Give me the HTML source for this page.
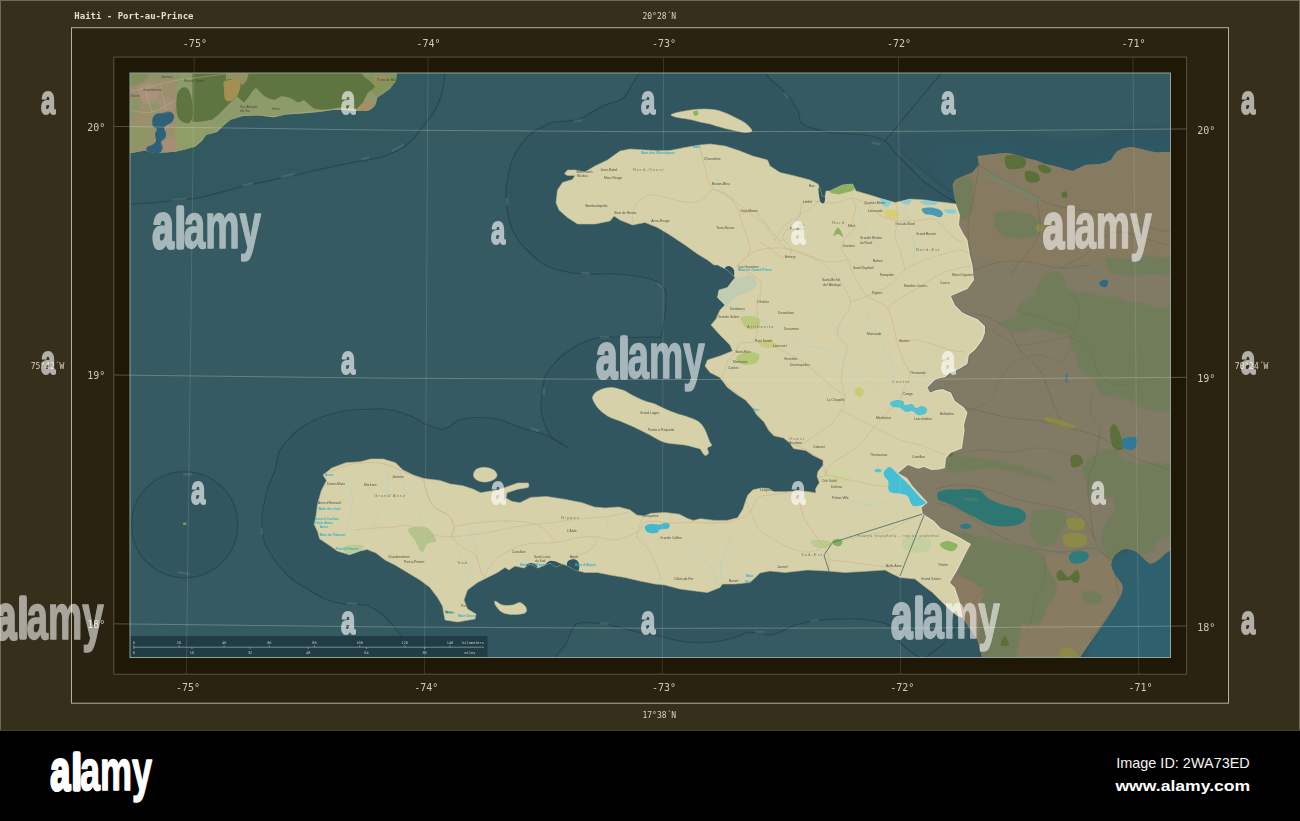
<!DOCTYPE html>
<html lang="en"><head><meta charset="utf-8"><title>Haiti - Port-au-Prince</title>
<style>
html,body{margin:0;padding:0;background:#000;}
body{width:1300px;height:821px;overflow:hidden;position:relative;}
svg{display:block;position:absolute;left:0;top:0;}
.mono{font-family:"DejaVu Sans Mono","Liberation Mono",monospace;}
.wm{font-family:"Liberation Sans","DejaVu Sans Condensed",sans-serif;font-weight:bold;}
.lbl{font-family:"Liberation Sans","DejaVu Sans",sans-serif;}
</style></head><body>
<svg width="1300" height="821" viewBox="0 0 1300 821">
<rect x="0" y="0" width="1300" height="821" fill="#000"/><rect x="0.5" y="0.5" width="1299" height="730" fill="#362f1c" stroke="#6f6853" stroke-width="1"/><rect x="71.5" y="27.7" width="1157" height="675.5" fill="#2b2311" stroke="#b8b097" stroke-width="1"/><rect x="113.8" y="57.1" width="1072.8" height="617.1" fill="#201806" stroke="#5a513b" stroke-width="1"/><defs><clipPath id="mapclip"><rect x="130.0" y="73.0" width="1040.5" height="584.5"/></clipPath><filter id="b2" x="-10%" y="-10%" width="120%" height="120%"><feGaussianBlur stdDeviation="2"/></filter><filter id="b3" x="-20%" y="-40%" width="140%" height="180%"><feGaussianBlur stdDeviation="5"/></filter><filter id="b1" x="-10%" y="-10%" width="120%" height="120%"><feGaussianBlur stdDeviation="0.8"/></filter><clipPath id="cubaclip"><path d="M128.0,72.0 L397.0,72.0 L396.0,81.0 L390.0,89.0 L383.0,94.0 L377.5,97.5 L376.5,102.0 L375.0,106.0 L371.0,109.5 L367.5,111.0 L355.0,111.0 L343.0,110.0 L332.5,110.0 L320.0,112.0 L310.0,113.0 L295.0,114.0 L286.0,114.5 L273.7,117.2 L259.0,115.4 L243.0,116.0 L230.6,119.7 L223.2,125.8 L217.0,132.0 L206.0,135.0 L202.3,140.6 L195.0,146.8 L185.0,149.5 L175.2,151.7 L165.0,152.5 L154.3,153.0 L144.5,150.5 L137.0,152.0 L128.0,153.5Z"/></clipPath><clipPath id="drclip"><path d="M956.0,204.0 L954.0,195.0 L952.5,185.0 L955.0,180.0 L960.0,177.5 L966.0,175.0 L972.5,172.5 L976.0,168.0 L979.0,165.0 L977.5,156.0 L982.5,155.5 L990.0,154.5 L1000.0,153.5 L1007.5,153.0 L1014.0,154.5 L1020.0,156.0 L1027.0,158.5 L1035.0,160.0 L1045.0,164.0 L1052.0,165.5 L1060.0,167.5 L1066.0,169.5 L1072.5,171.0 L1078.0,168.5 L1085.0,165.0 L1092.0,164.5 L1100.0,164.0 L1106.0,162.5 L1111.0,160.0 L1114.0,155.0 L1117.5,151.0 L1123.0,148.5 L1130.0,147.0 L1137.0,148.0 L1145.0,150.0 L1151.0,151.5 L1157.5,152.5 L1164.0,152.0 L1172.0,152.0 L1172.0,550.0 L1166.0,553.0 L1160.0,559.0 L1155.0,562.5 L1150.0,564.0 L1146.0,561.0 L1142.5,557.5 L1139.0,554.0 L1135.0,551.0 L1130.0,549.5 L1125.0,549.0 L1120.0,551.0 L1115.0,555.0 L1112.0,560.0 L1111.0,565.0 L1112.5,570.0 L1115.0,575.0 L1119.0,580.0 L1122.5,585.0 L1122.5,590.0 L1121.0,595.0 L1118.0,601.0 L1115.0,606.0 L1107.5,617.5 L1099.0,630.0 L1090.0,642.5 L1079.0,659.0 L982.5,659.0 L977.5,640.0 L970.0,629.0 L967.5,625.0 L962.5,617.5 L960.0,602.5 L955.0,587.5 L950.0,582.5 L957.5,570.0 L962.5,560.0 L967.5,550.0 L971.0,544.0 L960.0,537.5 L945.0,530.0 L941.0,528.5 L934.0,521.0 L922.8,513.7 L921.5,507.5 L927.7,502.6 L913.0,486.6 L907.0,478.0 L898.0,473.0 L908.0,465.0 L918.0,468.8 L924.0,467.0 L931.4,470.0 L939.0,469.4 L945.0,468.0 L946.0,458.0 L951.0,452.8 L962.0,448.5 L964.6,430.0 L964.0,425.0 L967.5,412.5 L964.0,407.5 L955.0,401.0 L951.0,392.5 L942.5,389.0 L936.0,390.0 L930.0,392.5 L927.5,387.5 L931.0,384.0 L935.0,380.0 L940.0,378.0 L945.0,377.5 L950.0,373.0 L955.0,371.0 L961.0,368.0 L967.5,364.0 L969.0,355.0 L975.0,350.0 L982.5,340.0 L985.0,333.0 L985.0,326.0 L977.5,319.0 L970.0,316.0 L962.5,312.5 L955.0,305.0 L951.0,296.0 L958.0,293.0 L967.5,289.0 L974.0,280.0 L972.5,265.0 L970.0,255.0 L967.5,240.0 L963.0,233.0 L959.0,225.0 L960.0,215.0 L956.0,204.0Z"/></clipPath><clipPath id="htclip"><path d="M564.5,173.8 L567.5,170.0 L575.0,170.0 L585.0,172.0 L595.0,166.0 L607.5,160.0 L620.0,151.0 L630.0,149.0 L645.0,150.0 L658.0,150.8 L670.0,150.5 L685.0,147.5 L700.0,145.0 L710.0,144.0 L725.0,146.0 L740.0,151.0 L752.5,156.0 L767.5,160.0 L770.0,166.0 L780.0,172.5 L795.0,176.0 L810.0,180.0 L818.0,184.0 L820.0,189.0 L822.0,196.0 L825.0,197.0 L826.0,191.0 L830.0,191.0 L836.0,188.0 L842.5,185.0 L852.5,184.0 L856.0,191.0 L863.0,193.0 L870.0,195.0 L882.5,199.0 L895.0,202.5 L902.0,201.0 L910.0,199.0 L925.0,200.0 L935.0,201.5 L945.0,202.5 L956.0,204.0 L960.0,215.0 L959.0,225.0 L963.0,233.0 L967.5,240.0 L970.0,255.0 L972.5,265.0 L974.0,280.0 L967.5,289.0 L958.0,293.0 L951.0,296.0 L955.0,305.0 L962.5,312.5 L970.0,316.0 L977.5,319.0 L985.0,326.0 L985.0,333.0 L982.5,340.0 L975.0,350.0 L969.0,355.0 L967.5,364.0 L961.0,368.0 L955.0,371.0 L950.0,373.0 L945.0,377.5 L940.0,378.0 L935.0,380.0 L931.0,384.0 L927.5,387.5 L930.0,392.5 L936.0,390.0 L942.5,389.0 L951.0,392.5 L955.0,401.0 L964.0,407.5 L967.5,412.5 L964.0,425.0 L964.6,430.0 L962.0,448.5 L951.0,452.8 L946.0,458.0 L945.0,468.0 L939.0,469.4 L931.4,470.0 L924.0,467.0 L918.0,468.8 L908.0,465.0 L898.0,473.0 L907.0,478.0 L913.0,486.6 L927.7,502.6 L921.5,507.5 L922.8,513.7 L934.0,521.0 L941.0,528.5 L945.0,530.0 L960.0,537.5 L971.0,544.0 L967.5,550.0 L962.5,560.0 L957.5,570.0 L950.0,582.5 L955.0,587.5 L960.0,602.5 L962.5,617.5 L957.5,616.0 L950.0,610.0 L942.5,602.5 L932.5,592.5 L922.5,585.0 L915.0,579.0 L900.0,577.5 L892.5,574.0 L885.0,570.0 L870.0,571.0 L845.0,572.5 L827.5,571.0 L807.5,570.0 L785.0,572.5 L770.0,571.0 L760.0,573.0 L750.0,582.5 L735.0,584.0 L722.5,584.0 L720.0,587.5 L707.5,592.5 L695.0,591.0 L680.0,589.0 L665.0,585.0 L655.0,584.0 L640.0,581.0 L625.0,577.5 L610.0,575.0 L597.5,572.5 L585.0,572.5 L575.0,570.0 L568.0,566.0 L562.5,564.0 L556.0,567.0 L550.0,563.0 L545.0,565.0 L538.0,568.0 L530.0,564.0 L524.0,568.0 L515.0,566.0 L509.0,570.0 L505.0,567.5 L497.5,572.5 L487.5,577.5 L477.5,582.5 L467.5,590.0 L464.0,600.0 L467.5,609.0 L476.0,614.0 L475.0,619.0 L457.5,622.0 L445.0,620.0 L442.5,606.0 L437.5,597.5 L430.0,587.5 L420.0,580.0 L407.5,572.5 L395.0,565.0 L385.0,560.0 L376.0,553.0 L367.2,549.4 L360.2,551.0 L349.5,554.7 L337.2,551.0 L330.0,545.8 L319.5,538.8 L317.7,531.7 L314.2,524.6 L316.0,515.8 L317.7,503.4 L321.2,491.0 L326.5,480.4 L323.0,475.0 L331.8,468.0 L346.0,462.7 L360.2,461.8 L370.8,459.0 L383.2,459.0 L395.5,462.7 L402.6,469.8 L413.2,475.0 L423.9,478.6 L439.8,480.4 L450.4,484.0 L462.8,485.7 L473.4,489.2 L480.5,492.8 L491.0,491.0 L498.0,490.0 L505.2,487.5 L517.6,483.0 L528.2,483.0 L529.0,485.5 L528.2,487.5 L517.6,489.2 L507.0,492.8 L506.0,498.0 L512.3,501.6 L520.0,502.7 L530.6,497.4 L546.5,496.5 L564.2,499.2 L582.0,502.7 L594.3,507.0 L605.0,508.0 L619.0,507.0 L629.7,509.8 L636.8,515.0 L643.9,516.0 L651.0,513.3 L665.0,512.5 L679.2,514.2 L688.0,518.7 L693.4,520.4 L700.5,518.7 L714.6,520.4 L727.0,520.4 L737.6,517.8 L743.0,509.0 L746.5,498.3 L748.0,494.8 L753.0,489.8 L761.5,488.0 L769.0,488.6 L773.8,491.7 L786.0,491.7 L798.5,491.0 L808.3,491.7 L815.7,493.0 L815.7,488.6 L819.4,482.5 L817.0,476.3 L818.0,471.4 L823.0,465.2 L823.0,460.3 L813.2,455.4 L805.8,450.5 L793.5,448.6 L789.8,443.0 L783.7,438.0 L773.8,435.7 L769.0,430.8 L764.0,422.0 L756.6,414.8 L753.0,408.6 L745.5,400.0 L737.5,395.0 L727.5,387.5 L720.0,377.5 L710.0,372.5 L705.0,366.0 L707.5,360.0 L720.0,356.0 L732.5,351.0 L730.0,345.0 L720.0,335.0 L711.0,325.0 L716.0,319.0 L720.0,310.0 L725.0,305.0 L717.5,297.5 L719.0,290.0 L727.5,287.5 L735.0,277.5 L727.5,270.0 L717.5,265.0 L714.0,265.0 L707.5,260.0 L697.5,254.0 L685.0,245.0 L670.0,235.0 L657.5,227.5 L645.0,222.5 L632.5,225.0 L620.0,220.0 L614.0,216.0 L610.0,221.0 L595.0,224.0 L577.5,224.0 L567.5,217.5 L559.0,210.0 L556.0,202.5 L557.5,190.0 L562.5,182.5 L572.5,179.5 L575.0,175.5 L567.5,175.5Z M671.0,115.0 L677.0,112.5 L685.0,111.0 L695.0,109.5 L705.0,109.0 L713.0,109.5 L720.0,111.0 L728.0,114.0 L735.0,117.5 L742.0,121.0 L747.5,125.0 L752.0,131.0 L745.0,132.5 L736.0,131.0 L727.5,129.0 L718.0,126.5 L710.0,124.0 L700.0,122.0 L692.5,120.0 L684.0,118.5 L677.5,117.5Z M592.5,397.5 L595.0,393.0 L600.0,390.0 L606.0,388.0 L612.5,387.5 L619.0,389.0 L625.0,391.0 L632.0,395.0 L640.0,399.0 L648.0,402.0 L655.0,404.0 L662.0,407.5 L670.0,411.0 L678.0,414.0 L685.0,416.0 L692.0,418.5 L697.5,421.0 L702.0,425.0 L706.0,432.0 L709.8,441.8 L711.7,445.5 L707.4,448.0 L708.6,453.0 L705.0,455.4 L701.2,450.5 L700.0,449.0 L693.0,447.0 L685.0,445.0 L675.0,444.0 L665.0,442.5 L657.0,439.0 L650.0,435.0 L642.0,431.0 L635.0,427.5 L627.0,424.0 L620.0,421.0 L613.0,418.5 L607.5,416.0 L602.0,412.0 L597.5,407.5 L594.0,402.0Z M495.0,601.0 L502.5,605.0 L512.5,605.0 L520.0,602.5 L526.0,607.5 L525.0,613.0 L512.5,614.5 L502.5,612.5 L496.0,606.0Z"/></clipPath></defs><g clip-path="url(#mapclip)"><rect x="130.0" y="73.0" width="1040.5" height="584.5" fill="#355a61"/><g filter="url(#b1)"><path d="M640.0,72.0 L632.5,84.0 L624.0,97.5 L615.0,102.0 L605.0,105.0 L592.0,112.0 L580.0,119.0 L566.0,121.0 L552.5,122.5 L542.0,127.0 L532.5,132.5 L524.0,141.0 L517.5,150.0 L512.0,161.0 L509.0,172.5 L506.5,186.0 L506.0,200.0 L507.5,211.0 L510.0,222.5 L514.0,233.0 L520.0,242.5 L527.0,250.0 L535.0,257.5 L545.0,265.0 L562.5,271.0 L585.0,274.0 L620.0,274.0 L645.0,277.5 L655.0,280.5 L660.0,284.0 L664.0,288.0 L666.0,292.5 L666.0,303.0 L665.0,315.0 L661.0,337.5 L648.0,337.0 L632.5,337.5 L615.0,337.0 L600.0,337.5 L590.0,340.0 L580.0,344.0 L570.0,350.0 L560.0,357.5 L553.0,365.0 L547.5,372.5 L544.0,381.0 L542.5,390.0 L541.0,407.5 L542.5,417.0 L545.0,425.0 L549.0,433.0 L555.0,440.0 L567.5,447.5 L557.5,441.0 L545.0,435.0 L532.0,431.0 L520.0,427.5 L500.0,420.0 L488.0,418.0 L477.5,417.5 L467.0,418.5 L457.5,421.0 L445.0,429.0 L435.0,427.5 L425.0,424.0 L415.0,418.0 L405.0,414.0 L393.0,410.5 L380.0,409.0 L362.0,409.5 L345.0,411.0 L330.0,414.5 L315.0,420.0 L304.0,426.0 L295.0,432.5 L287.0,441.0 L280.0,450.0 L277.0,460.0 L275.0,470.0 L267.5,490.0 L262.5,512.5 L262.0,522.0 L262.5,532.5 L265.0,543.0 L270.0,552.5 L277.0,563.0 L285.0,572.5 L294.0,580.5 L305.0,587.5 L325.0,599.0 L345.0,604.0 L365.0,605.0 L373.0,608.0 L380.0,612.5 L387.0,618.5 L392.5,625.0 L401.0,636.0 L412.0,660.0 L552.5,660.0 L565.0,645.0 L570.0,634.0 L575.0,625.0 L580.0,623.0 L585.0,622.5 L605.0,624.0 L620.0,627.5 L640.0,632.5 L660.0,636.0 L680.0,641.0 L700.0,642.5 L720.0,641.0 L735.0,637.5 L747.5,632.5 L758.0,633.0 L770.0,635.0 L782.0,631.0 L795.0,625.0 L820.0,620.0 L855.0,618.8 L875.0,621.0 L890.0,626.0 L900.0,642.5 L922.5,660.0 L1172.0,660.0 L1172.0,124.0 L1172.0,124.0 L1130.0,126.0 L1100.0,136.0 L1075.0,140.0 L1050.0,137.0 L1010.0,131.0 L960.0,131.0 L930.0,131.5 L900.0,134.0 L885.0,141.0 L956.0,202.5 L945.0,196.0 L925.0,182.5 L910.0,167.5 L895.0,152.5 L885.0,141.0 L865.0,135.0 L830.0,132.5 L802.5,124.0 L797.5,110.0 L785.0,92.5 L770.0,79.0 L765.0,72.0Z" fill="#305760"/><path d="M128.0,204.5 L150.0,203.0 L170.0,201.0 L202.0,197.0 L245.0,186.0 L295.0,175.0 L345.0,164.0 L380.0,157.5 L400.0,149.0 L412.0,140.0 L420.0,130.0 L428.0,120.0 L435.0,110.0 L442.0,92.5 L445.0,72.0 L128.0,72.0Z" fill="#325860"/><circle cx="184.6" cy="524.7" r="53" fill="#305760"/></g><path d="M1079,670 L1190,670 L1190,530 L1140,545 L1105,560 L1110,600 Z" fill="#2f6575" opacity="0.7" filter="url(#b2)"/><path d="M930,150 L1000,140 L1060,150 L1110,146 L1135,134 L1190,136 L1190,175 L1100,185 L1000,175 L960,210 Z" fill="#2b5b6b" opacity="0.35" filter="url(#b3)"/><path d="M128.0,72.0 L397.0,72.0 L396.0,81.0 L390.0,89.0 L383.0,94.0 L377.5,97.5 L376.5,102.0 L375.0,106.0 L371.0,109.5 L367.5,111.0 L355.0,111.0 L343.0,110.0 L332.5,110.0 L320.0,112.0 L310.0,113.0 L295.0,114.0 L286.0,114.5 L273.7,117.2 L259.0,115.4 L243.0,116.0 L230.6,119.7 L223.2,125.8 L217.0,132.0 L206.0,135.0 L202.3,140.6 L195.0,146.8 L185.0,149.5 L175.2,151.7 L165.0,152.5 L154.3,153.0 L144.5,150.5 L137.0,152.0 L128.0,153.5Z" fill="#8d9a69"/><path d="M128.0,72.0 L178.0,72.0 L176.0,88.0 L177.0,105.0 L175.0,127.0 L175.5,151.5 L165.0,152.5 L154.3,153.0 L144.5,150.5 L137.0,152.0 L128.0,153.5Z" fill="#9b8f6e"/><path d="M175.0,127.0 L205.0,127.0 L206.0,135.0 L202.3,140.6 L195.0,146.8 L185.0,149.5 L175.2,151.7Z" fill="#8f9e66"/><path d="M192.5,72.0 L362.0,72.0 L363.0,75.4 L370.0,81.0 L375.4,86.5 L372.0,90.0 L368.0,92.6 L365.0,98.0 L363.0,102.5 L360.0,106.0 L357.0,108.6 L347.0,108.0 L338.5,107.4 L332.0,108.8 L326.0,109.8 L320.0,109.5 L313.8,108.6 L308.5,104.0 L304.0,100.0 L300.5,101.5 L297.8,102.5 L293.0,99.5 L289.2,97.5 L284.5,96.5 L280.6,96.3 L277.5,98.5 L274.5,100.0 L269.0,98.5 L264.6,96.3 L260.0,92.0 L256.0,87.7 L253.5,90.0 L251.5,92.6 L247.0,99.0 L244.0,102.5 L240.0,99.0 L236.8,96.3 L230.0,103.0 L224.5,108.6 L218.0,115.0 L212.0,119.7 L202.0,121.5 L192.5,122.0Z" fill="#5f7541"/><path d="M176.5,100.0 C176.8,97.0 176.9,94.1 178.0,92.0 C179.1,89.9 181.3,88.0 183.0,87.5 C184.7,87.0 186.7,87.6 188.0,89.0 C189.3,90.4 190.2,93.2 191.0,96.0 C191.8,98.8 192.2,102.5 192.5,106.0 C192.8,109.5 193.1,114.2 192.5,117.0 C191.9,119.8 190.6,122.2 189.0,123.0 C187.4,123.8 184.8,122.8 183.0,122.0 C181.2,121.2 179.6,120.0 178.5,118.0 C177.4,116.0 176.8,113.0 176.5,110.0 C176.2,107.0 176.2,103.0 176.5,100.0Z" fill="#5f7541"/><path d="M225.7,72.0 L249.0,72.0 L247.0,80.0 L243.0,85.0 L238.0,82.0 L230.0,79.0 L226.0,80.0Z" fill="#94915e"/><path d="M223.8,82.0 C224.5,80.4 226.0,80.5 228.0,80.3 C230.0,80.0 233.9,79.9 236.0,80.5 C238.1,81.1 240.0,82.1 240.5,84.0 C241.0,85.9 239.8,89.8 239.0,92.0 C238.2,94.2 237.5,95.5 236.0,97.0 C234.5,98.5 231.8,100.9 230.0,101.2 C228.2,101.5 226.0,100.9 225.0,99.0 C224.0,97.1 224.2,92.8 224.0,90.0 C223.8,87.2 223.1,83.6 223.8,82.0Z" fill="#a38f52"/><path d="M152.5,119.0 C153.0,117.0 154.2,115.0 156.0,114.0 C157.8,113.0 161.3,113.4 163.0,113.0 C164.7,112.6 164.7,111.7 166.0,111.5 C167.3,111.3 169.7,111.2 171.0,112.0 C172.3,112.8 173.8,114.3 174.0,116.0 C174.2,117.7 173.2,120.5 172.0,122.0 C170.8,123.5 168.3,124.0 167.0,125.0 C165.7,126.0 164.2,126.7 164.0,128.0 C163.8,129.3 165.8,131.2 166.0,133.0 C166.2,134.8 165.8,137.5 165.0,139.0 C164.2,140.5 161.3,140.7 161.0,142.0 C160.7,143.3 163.2,145.2 163.0,147.0 C162.8,148.8 161.4,151.5 160.0,152.5 C158.6,153.5 156.5,153.2 154.3,153.0 C152.1,152.8 148.2,152.0 147.0,151.0 C145.8,150.0 146.2,148.0 147.0,147.0 C147.8,146.0 150.5,146.0 152.0,145.0 C153.5,144.0 155.5,142.8 156.0,141.0 C156.5,139.2 154.8,136.0 155.0,134.0 C155.2,132.0 157.3,130.3 157.0,129.0 C156.7,127.7 153.8,127.7 153.0,126.0 C152.2,124.3 152.0,121.0 152.5,119.0Z" fill="#2d6079"/><g clip-path="url(#cubaclip)"><path d="M362,72 L398,72 L397,80 L390,88 L380,95 L375.4,96.3 L372,90 L375.4,86.5 L370,81 L363,75.4 Z" fill="#86935a"/><path d="M374,76 L384,75 L388,79 L380,83 L374,81 Z" fill="#9b8f62"/><path d="M357.5,109.0 C357.7,107.8 359.6,105.8 361.0,104.5 C362.4,103.2 364.3,101.7 366.0,101.0 C367.7,100.3 369.8,100.0 371.0,100.5 C372.2,101.0 373.0,102.7 373.0,104.0 C373.0,105.3 371.9,107.3 371.0,108.5 C370.1,109.7 369.3,110.7 367.5,111.2 C365.7,111.7 361.7,111.9 360.0,111.5 C358.3,111.1 357.3,110.2 357.5,109.0Z" fill="#a48f66"/><path d="M128.0,72.0 C131.7,69.7 147.0,70.7 150.0,72.0 C153.0,73.3 148.0,78.0 146.0,80.0 C144.0,82.0 141.0,83.0 138.0,84.0 C135.0,85.0 129.7,88.0 128.0,86.0 C126.3,84.0 124.3,74.3 128.0,72.0Z" fill="#7f8f5c" filter="url(#b1)"/><path d="M150.0,72.0 C153.7,70.7 173.7,70.7 178.0,72.0 C182.3,73.3 178.2,79.0 176.0,80.0 C173.8,81.0 168.3,78.0 165.0,78.0 C161.7,78.0 158.5,81.0 156.0,80.0 C153.5,79.0 146.3,73.3 150.0,72.0Z" fill="#8d9468" filter="url(#b1)"/><path d="M128.0,100.0 C129.3,96.3 134.0,96.7 136.0,98.0 C138.0,99.3 140.3,104.7 140.0,108.0 C139.7,111.3 136.0,116.0 134.0,118.0 C132.0,120.0 129.0,123.0 128.0,120.0 C127.0,117.0 126.7,103.7 128.0,100.0Z" fill="#8b9466" filter="url(#b1)"/><path d="M140.0,86.0 C142.0,84.0 148.7,83.0 152.0,84.0 C155.3,85.0 159.3,89.0 160.0,92.0 C160.7,95.0 158.3,100.0 156.0,102.0 C153.7,104.0 148.7,105.0 146.0,104.0 C143.3,103.0 141.0,99.0 140.0,96.0 C139.0,93.0 138.0,88.0 140.0,86.0Z" fill="#a8927a" filter="url(#b1)"/><path d="M158.0,100.0 C160.0,98.0 167.3,96.7 170.0,98.0 C172.7,99.3 174.7,105.7 174.0,108.0 C173.3,110.3 168.7,111.7 166.0,112.0 C163.3,112.3 159.3,112.0 158.0,110.0 C156.7,108.0 156.0,102.0 158.0,100.0Z" fill="#a39178" filter="url(#b1)"/><path d="M130.0,128.0 C133.3,124.2 146.3,125.0 150.0,127.0 C153.7,129.0 153.7,136.5 152.0,140.0 C150.3,143.5 143.7,146.3 140.0,148.0 C136.3,149.7 131.7,153.3 130.0,150.0 C128.3,146.7 126.7,131.8 130.0,128.0Z" fill="#8f9565" filter="url(#b1)"/><path d="M163.0,140.0 C164.7,137.8 172.9,137.2 175.0,139.0 C177.1,140.8 177.2,148.8 175.5,151.0 C173.8,153.2 167.1,153.8 165.0,152.0 C162.9,150.2 161.3,142.2 163.0,140.0Z" fill="#a69074" filter="url(#b1)"/><path d="M150.0,104.0 C151.0,102.7 156.5,102.0 158.0,103.0 C159.5,104.0 160.0,108.7 159.0,110.0 C158.0,111.3 153.5,112.0 152.0,111.0 C150.5,110.0 149.0,105.3 150.0,104.0Z" fill="#8a9a66" filter="url(#b1)"/><path d="M206,135 L217,132 L223,126 L231,120 L243,116 L259,115.4 L274,117.2 L286,114.5 L300,113 L320,111 L340,109.5 L355,111" fill="none" stroke="#a9a57a" stroke-width="1.6" opacity="0.7"/><g fill="none" stroke="#c9b08e" stroke-width="0.6" opacity="0.7"><path d="M128.0,92.0 C130.8,91.3 139.7,89.3 145.0,88.0 C150.3,86.7 154.5,85.3 160.0,84.0 C165.5,82.7 172.2,81.0 178.0,80.0 C183.8,79.0 189.7,78.7 195.0,78.0 C200.3,77.3 205.0,76.7 210.0,76.0 C215.0,75.3 222.5,74.3 225.0,74.0"/><path d="M145.0,88.0 C145.5,90.0 146.8,96.0 148.0,100.0 C149.2,104.0 151.3,110.0 152.0,112.0"/><path d="M128.0,110.0 C130.0,110.3 136.0,111.7 140.0,112.0 C144.0,112.3 147.8,113.0 152.0,112.0 C156.2,111.0 161.0,108.0 165.0,106.0 C169.0,104.0 174.2,101.0 176.0,100.0"/><path d="M195.0,146.0 C196.7,144.7 201.2,140.7 205.0,138.0 C208.8,135.3 213.5,132.8 218.0,130.0 C222.5,127.2 227.5,123.0 232.0,121.0 C236.5,119.0 240.0,118.7 245.0,118.0 C250.0,117.3 256.2,117.2 262.0,117.0 C267.8,116.8 277.0,116.6 280.0,116.5"/><path d="M160.0,84.0 C160.5,86.0 162.0,91.7 163.0,96.0 C164.0,100.3 165.5,107.7 166.0,110.0"/></g><g class="lbl" font-size="3.2px" fill="#3a3a2c" opacity="0.8"><text x="143.0" y="90.5">Guantánamo</text><text x="161.0" y="77.5">Jamaica</text><text x="184.0" y="81.5">Manuel Tames</text><text x="130.5" y="96.5">Niceto</text><text x="240.0" y="108.0">San Antonio</text><text x="240.0" y="112.0">del Sur</text><text x="272.0" y="110.0">Imías</text><text x="377.0" y="81.0">Punta de Maisí</text></g></g><path d="M564.5,173.8 L567.5,170.0 L575.0,170.0 L585.0,172.0 L595.0,166.0 L607.5,160.0 L620.0,151.0 L630.0,149.0 L645.0,150.0 L658.0,150.8 L670.0,150.5 L685.0,147.5 L700.0,145.0 L710.0,144.0 L725.0,146.0 L740.0,151.0 L752.5,156.0 L767.5,160.0 L770.0,166.0 L780.0,172.5 L795.0,176.0 L810.0,180.0 L818.0,184.0 L820.0,189.0 L822.0,196.0 L825.0,197.0 L826.0,191.0 L830.0,191.0 L836.0,188.0 L842.5,185.0 L852.5,184.0 L856.0,191.0 L863.0,193.0 L870.0,195.0 L882.5,199.0 L895.0,202.5 L902.0,201.0 L910.0,199.0 L925.0,200.0 L935.0,201.5 L945.0,202.5 L956.0,204.0 L960.0,215.0 L959.0,225.0 L963.0,233.0 L967.5,240.0 L970.0,255.0 L972.5,265.0 L974.0,280.0 L967.5,289.0 L958.0,293.0 L951.0,296.0 L955.0,305.0 L962.5,312.5 L970.0,316.0 L977.5,319.0 L985.0,326.0 L985.0,333.0 L982.5,340.0 L975.0,350.0 L969.0,355.0 L967.5,364.0 L961.0,368.0 L955.0,371.0 L950.0,373.0 L945.0,377.5 L940.0,378.0 L935.0,380.0 L931.0,384.0 L927.5,387.5 L930.0,392.5 L936.0,390.0 L942.5,389.0 L951.0,392.5 L955.0,401.0 L964.0,407.5 L967.5,412.5 L964.0,425.0 L964.6,430.0 L962.0,448.5 L951.0,452.8 L946.0,458.0 L945.0,468.0 L939.0,469.4 L931.4,470.0 L924.0,467.0 L918.0,468.8 L908.0,465.0 L898.0,473.0 L907.0,478.0 L913.0,486.6 L927.7,502.6 L921.5,507.5 L922.8,513.7 L934.0,521.0 L941.0,528.5 L945.0,530.0 L960.0,537.5 L971.0,544.0 L967.5,550.0 L962.5,560.0 L957.5,570.0 L950.0,582.5 L955.0,587.5 L960.0,602.5 L962.5,617.5 L957.5,616.0 L950.0,610.0 L942.5,602.5 L932.5,592.5 L922.5,585.0 L915.0,579.0 L900.0,577.5 L892.5,574.0 L885.0,570.0 L870.0,571.0 L845.0,572.5 L827.5,571.0 L807.5,570.0 L785.0,572.5 L770.0,571.0 L760.0,573.0 L750.0,582.5 L735.0,584.0 L722.5,584.0 L720.0,587.5 L707.5,592.5 L695.0,591.0 L680.0,589.0 L665.0,585.0 L655.0,584.0 L640.0,581.0 L625.0,577.5 L610.0,575.0 L597.5,572.5 L585.0,572.5 L575.0,570.0 L568.0,566.0 L562.5,564.0 L556.0,567.0 L550.0,563.0 L545.0,565.0 L538.0,568.0 L530.0,564.0 L524.0,568.0 L515.0,566.0 L509.0,570.0 L505.0,567.5 L497.5,572.5 L487.5,577.5 L477.5,582.5 L467.5,590.0 L464.0,600.0 L467.5,609.0 L476.0,614.0 L475.0,619.0 L457.5,622.0 L445.0,620.0 L442.5,606.0 L437.5,597.5 L430.0,587.5 L420.0,580.0 L407.5,572.5 L395.0,565.0 L385.0,560.0 L376.0,553.0 L367.2,549.4 L360.2,551.0 L349.5,554.7 L337.2,551.0 L330.0,545.8 L319.5,538.8 L317.7,531.7 L314.2,524.6 L316.0,515.8 L317.7,503.4 L321.2,491.0 L326.5,480.4 L323.0,475.0 L331.8,468.0 L346.0,462.7 L360.2,461.8 L370.8,459.0 L383.2,459.0 L395.5,462.7 L402.6,469.8 L413.2,475.0 L423.9,478.6 L439.8,480.4 L450.4,484.0 L462.8,485.7 L473.4,489.2 L480.5,492.8 L491.0,491.0 L498.0,490.0 L505.2,487.5 L517.6,483.0 L528.2,483.0 L529.0,485.5 L528.2,487.5 L517.6,489.2 L507.0,492.8 L506.0,498.0 L512.3,501.6 L520.0,502.7 L530.6,497.4 L546.5,496.5 L564.2,499.2 L582.0,502.7 L594.3,507.0 L605.0,508.0 L619.0,507.0 L629.7,509.8 L636.8,515.0 L643.9,516.0 L651.0,513.3 L665.0,512.5 L679.2,514.2 L688.0,518.7 L693.4,520.4 L700.5,518.7 L714.6,520.4 L727.0,520.4 L737.6,517.8 L743.0,509.0 L746.5,498.3 L748.0,494.8 L753.0,489.8 L761.5,488.0 L769.0,488.6 L773.8,491.7 L786.0,491.7 L798.5,491.0 L808.3,491.7 L815.7,493.0 L815.7,488.6 L819.4,482.5 L817.0,476.3 L818.0,471.4 L823.0,465.2 L823.0,460.3 L813.2,455.4 L805.8,450.5 L793.5,448.6 L789.8,443.0 L783.7,438.0 L773.8,435.7 L769.0,430.8 L764.0,422.0 L756.6,414.8 L753.0,408.6 L745.5,400.0 L737.5,395.0 L727.5,387.5 L720.0,377.5 L710.0,372.5 L705.0,366.0 L707.5,360.0 L720.0,356.0 L732.5,351.0 L730.0,345.0 L720.0,335.0 L711.0,325.0 L716.0,319.0 L720.0,310.0 L725.0,305.0 L717.5,297.5 L719.0,290.0 L727.5,287.5 L735.0,277.5 L727.5,270.0 L717.5,265.0 L714.0,265.0 L707.5,260.0 L697.5,254.0 L685.0,245.0 L670.0,235.0 L657.5,227.5 L645.0,222.5 L632.5,225.0 L620.0,220.0 L614.0,216.0 L610.0,221.0 L595.0,224.0 L577.5,224.0 L567.5,217.5 L559.0,210.0 L556.0,202.5 L557.5,190.0 L562.5,182.5 L572.5,179.5 L575.0,175.5 L567.5,175.5Z" fill="#d6d1a9" stroke="#b9b690" stroke-width="0.6"/><path d="M671.0,115.0 C670.9,114.2 674.7,113.2 677.0,112.5 C679.3,111.8 682.0,111.5 685.0,111.0 C688.0,110.5 691.7,109.8 695.0,109.5 C698.3,109.2 702.0,109.0 705.0,109.0 C708.0,109.0 710.5,109.2 713.0,109.5 C715.5,109.8 717.5,110.2 720.0,111.0 C722.5,111.8 725.5,112.9 728.0,114.0 C730.5,115.1 732.7,116.3 735.0,117.5 C737.3,118.7 739.9,119.8 742.0,121.0 C744.1,122.2 745.8,123.3 747.5,125.0 C749.2,126.7 752.4,129.8 752.0,131.0 C751.6,132.2 747.7,132.5 745.0,132.5 C742.3,132.5 738.9,131.6 736.0,131.0 C733.1,130.4 730.5,129.8 727.5,129.0 C724.5,128.2 720.9,127.3 718.0,126.5 C715.1,125.7 713.0,124.8 710.0,124.0 C707.0,123.2 702.9,122.7 700.0,122.0 C697.1,121.3 695.2,120.6 692.5,120.0 C689.8,119.4 686.5,118.9 684.0,118.5 C681.5,118.1 679.7,118.1 677.5,117.5 C675.3,116.9 671.1,115.8 671.0,115.0Z" fill="#d6d1a9" stroke="#b9b690" stroke-width="0.5"/><path d="M592.5,397.5 C592.7,396.0 593.8,394.2 595.0,393.0 C596.2,391.8 598.2,390.8 600.0,390.0 C601.8,389.2 603.9,388.4 606.0,388.0 C608.1,387.6 610.3,387.3 612.5,387.5 C614.7,387.7 616.9,388.4 619.0,389.0 C621.1,389.6 622.8,390.0 625.0,391.0 C627.2,392.0 629.5,393.7 632.0,395.0 C634.5,396.3 637.3,397.8 640.0,399.0 C642.7,400.2 645.5,401.2 648.0,402.0 C650.5,402.8 652.7,403.1 655.0,404.0 C657.3,404.9 659.5,406.3 662.0,407.5 C664.5,408.7 667.3,409.9 670.0,411.0 C672.7,412.1 675.5,413.2 678.0,414.0 C680.5,414.8 682.7,415.2 685.0,416.0 C687.3,416.8 689.9,417.7 692.0,418.5 C694.1,419.3 695.8,419.9 697.5,421.0 C699.2,422.1 700.6,423.2 702.0,425.0 C703.4,426.8 704.7,429.2 706.0,432.0 C707.3,434.8 708.8,439.6 709.8,441.8 C710.8,444.1 712.1,444.5 711.7,445.5 C711.3,446.5 707.9,446.8 707.4,448.0 C706.9,449.2 709.0,451.8 708.6,453.0 C708.2,454.2 706.2,455.8 705.0,455.4 C703.8,455.0 702.0,451.6 701.2,450.5 C700.4,449.4 701.4,449.6 700.0,449.0 C698.6,448.4 695.5,447.7 693.0,447.0 C690.5,446.3 688.0,445.5 685.0,445.0 C682.0,444.5 678.3,444.4 675.0,444.0 C671.7,443.6 668.0,443.3 665.0,442.5 C662.0,441.7 659.5,440.2 657.0,439.0 C654.5,437.8 652.5,436.3 650.0,435.0 C647.5,433.7 644.5,432.2 642.0,431.0 C639.5,429.8 637.5,428.7 635.0,427.5 C632.5,426.3 629.5,425.1 627.0,424.0 C624.5,422.9 622.3,421.9 620.0,421.0 C617.7,420.1 615.1,419.3 613.0,418.5 C610.9,417.7 609.3,417.1 607.5,416.0 C605.7,414.9 603.7,413.4 602.0,412.0 C600.3,410.6 598.8,409.2 597.5,407.5 C596.2,405.8 594.8,403.7 594.0,402.0 C593.2,400.3 592.3,399.0 592.5,397.5Z" fill="#d6d1a9" stroke="#b9b690" stroke-width="0.5"/><path d="M495.0,601.0 C496.1,600.8 499.6,604.3 502.5,605.0 C505.4,605.7 509.6,605.4 512.5,605.0 C515.4,604.6 517.8,602.1 520.0,602.5 C522.2,602.9 525.2,605.8 526.0,607.5 C526.8,609.2 527.2,611.8 525.0,613.0 C522.8,614.2 516.2,614.6 512.5,614.5 C508.8,614.4 505.2,613.9 502.5,612.5 C499.8,611.1 497.2,607.9 496.0,606.0 C494.8,604.1 493.9,601.2 495.0,601.0Z" fill="#d6d1a9" stroke="#b9b690" stroke-width="0.5"/><path d="M473.5,474.0 C473.8,472.6 474.6,470.6 476.0,469.5 C477.4,468.4 479.8,467.8 482.0,467.5 C484.2,467.2 486.8,467.4 489.0,468.0 C491.2,468.6 493.7,469.7 495.0,471.0 C496.3,472.3 497.3,474.5 497.0,476.0 C496.7,477.5 494.8,479.0 493.0,480.0 C491.2,481.0 488.3,481.8 486.0,482.0 C483.7,482.2 480.9,481.7 479.0,481.0 C477.1,480.3 475.4,479.2 474.5,478.0 C473.6,476.8 473.2,475.4 473.5,474.0Z" fill="#d6d1a9" stroke="#b9b690" stroke-width="0.5"/><path d="M956.0,204.0 L954.0,195.0 L952.5,185.0 L955.0,180.0 L960.0,177.5 L966.0,175.0 L972.5,172.5 L976.0,168.0 L979.0,165.0 L977.5,156.0 L982.5,155.5 L990.0,154.5 L1000.0,153.5 L1007.5,153.0 L1014.0,154.5 L1020.0,156.0 L1027.0,158.5 L1035.0,160.0 L1045.0,164.0 L1052.0,165.5 L1060.0,167.5 L1066.0,169.5 L1072.5,171.0 L1078.0,168.5 L1085.0,165.0 L1092.0,164.5 L1100.0,164.0 L1106.0,162.5 L1111.0,160.0 L1114.0,155.0 L1117.5,151.0 L1123.0,148.5 L1130.0,147.0 L1137.0,148.0 L1145.0,150.0 L1151.0,151.5 L1157.5,152.5 L1164.0,152.0 L1172.0,152.0 L1172.0,550.0 L1166.0,553.0 L1160.0,559.0 L1155.0,562.5 L1150.0,564.0 L1146.0,561.0 L1142.5,557.5 L1139.0,554.0 L1135.0,551.0 L1130.0,549.5 L1125.0,549.0 L1120.0,551.0 L1115.0,555.0 L1112.0,560.0 L1111.0,565.0 L1112.5,570.0 L1115.0,575.0 L1119.0,580.0 L1122.5,585.0 L1122.5,590.0 L1121.0,595.0 L1118.0,601.0 L1115.0,606.0 L1107.5,617.5 L1099.0,630.0 L1090.0,642.5 L1079.0,659.0 L982.5,659.0 L977.5,640.0 L970.0,629.0 L967.5,625.0 L962.5,617.5 L960.0,602.5 L955.0,587.5 L950.0,582.5 L957.5,570.0 L962.5,560.0 L967.5,550.0 L971.0,544.0 L960.0,537.5 L945.0,530.0 L941.0,528.5 L934.0,521.0 L922.8,513.7 L921.5,507.5 L927.7,502.6 L913.0,486.6 L907.0,478.0 L898.0,473.0 L908.0,465.0 L918.0,468.8 L924.0,467.0 L931.4,470.0 L939.0,469.4 L945.0,468.0 L946.0,458.0 L951.0,452.8 L962.0,448.5 L964.6,430.0 L964.0,425.0 L967.5,412.5 L964.0,407.5 L955.0,401.0 L951.0,392.5 L942.5,389.0 L936.0,390.0 L930.0,392.5 L927.5,387.5 L931.0,384.0 L935.0,380.0 L940.0,378.0 L945.0,377.5 L950.0,373.0 L955.0,371.0 L961.0,368.0 L967.5,364.0 L969.0,355.0 L975.0,350.0 L982.5,340.0 L985.0,333.0 L985.0,326.0 L977.5,319.0 L970.0,316.0 L962.5,312.5 L955.0,305.0 L951.0,296.0 L958.0,293.0 L967.5,289.0 L974.0,280.0 L972.5,265.0 L970.0,255.0 L967.5,240.0 L963.0,233.0 L959.0,225.0 L960.0,215.0 L956.0,204.0Z" fill="#817a65"/><g clip-path="url(#drclip)"><path d="M950,150 L1172,140 L1172,270 L1100,262 L1040,268 L1000,262 L965,255 Z" fill="#867a60" filter="url(#b2)"/><path d="M1044,556 L1112,556 L1125,590 L1100,630 L1080,660 L1015,660 L1021,624 L1040,624 L1056,595 L1056,583 Z" fill="#877c62" filter="url(#b1)"/><path d="M952,578 L968,579.5 L985.7,590 L980.4,604.3 L979.5,643 L983,657 L975,640 L962,618 L960,602 Z" fill="#8a7b60"/><path d="M1017.5,311.0 L1021.0,303.0 L1033.5,296.0 L1037.0,287.0 L1042.0,279.0 L1050.0,272.0 L1058.0,271.0 L1064.0,278.0 L1065.3,287.0 L1076.0,292.4 L1090.0,292.4 L1104.2,297.7 L1114.9,296.0 L1129.0,303.0 L1139.6,301.2 L1153.8,308.3 L1172.0,306.5 L1172.0,411.0 L1153.8,410.0 L1139.6,407.4 L1129.0,400.3 L1114.9,396.8 L1100.7,393.2 L1095.4,382.6 L1086.5,375.5 L1079.5,368.5 L1076.0,357.8 L1072.4,347.2 L1068.9,336.6 L1058.2,333.0 L1047.6,331.3 L1037.0,327.8 L1026.4,331.3 L1015.8,333.0 L1010.5,329.5 L998.0,322.5 L1005.0,320.7 L1015.8,319.0Z" fill="#717c5a" filter="url(#b1)"/><path d="M1104.0,257.0 L1125.0,259.0 L1150.0,256.0 L1172.0,258.0 L1172.0,275.0 L1150.0,274.0 L1130.0,276.0 L1110.0,272.0Z" fill="#717c5a" filter="url(#b1)"/><path d="M994.5,213.0 L1010.0,211.0 L1030.0,214.0 L1040.5,222.0 L1038.0,235.0 L1020.0,239.0 L1002.0,236.0 L994.0,226.0Z" fill="#717c5a" filter="url(#b1)"/><path d="M955.6,180.0 L965.0,177.0 L973.0,180.0 L973.0,200.0 L970.0,215.0 L962.0,221.0 L956.0,212.0 L954.0,195.0Z" fill="#717c5a" filter="url(#b1)"/><path d="M1081.0,467.8 L1091.9,457.0 L1104.0,450.0 L1118.4,450.0 L1122.0,459.0 L1136.0,462.5 L1172.0,464.0 L1172.0,535.0 L1157.0,540.0 L1153.8,551.0 L1139.6,554.5 L1130.8,549.0 L1122.0,549.0 L1114.9,554.5 L1109.5,561.5 L1104.0,551.0 L1100.7,540.0 L1104.2,526.0 L1114.9,512.0 L1114.9,497.8 L1106.0,496.0 L1088.3,496.0 L1086.5,480.0Z" fill="#717c5a" filter="url(#b1)"/><path d="M1033.5,512.0 L1051.0,508.5 L1065.3,512.0 L1067.0,522.6 L1058.2,533.0 L1054.7,543.8 L1040.5,547.4 L1031.7,536.8 L1030.0,522.6Z" fill="#717c5a" filter="url(#b1)"/><path d="M952.0,455.4 L971.5,458.0 L998.0,460.7 L1019.3,466.0 L1044.0,474.8 L1054.7,478.4 L1051.0,482.0 L1033.5,476.6 L1012.2,471.3 L989.2,467.8 L962.7,471.3 L948.5,473.0 L946.0,462.0Z" fill="#717c5a" filter="url(#b1)"/><path d="M941.0,528.5 L955.0,531.0 L968.0,533.0 L985.0,538.0 L998.0,542.0 L1015.0,545.0 L1030.0,547.7 L1044.0,556.5 L1047.6,570.7 L1056.5,583.0 L1054.7,595.5 L1047.6,604.3 L1044.0,615.0 L1040.5,623.8 L1021.0,623.8 L1019.3,639.7 L1015.8,658.0 L982.0,658.0 L979.5,643.0 L980.4,604.3 L985.7,590.0 L968.0,579.5 L957.0,572.0 L962.7,560.0 L969.8,551.0 L971.0,544.0 L960.0,537.5 L945.0,530.0Z" fill="#717c5a" filter="url(#b1)"/><path d="M1081.0,592.0 L1095.0,591.0 L1102.5,596.0 L1100.0,603.0 L1088.0,604.5 L1082.0,600.0Z" fill="#717c5a" filter="url(#b1)"/><path d="M986,174 L1000,180 L1020,190 L1038,200" fill="none" stroke="#788468" stroke-width="7" stroke-linecap="round" opacity="0.8"/><path d="M1005.0,157.0 C1005.8,154.8 1009.2,155.2 1012.0,155.0 C1014.8,154.8 1019.7,155.0 1022.0,156.0 C1024.3,157.0 1025.7,159.2 1026.0,161.0 C1026.3,162.8 1025.7,165.7 1024.0,167.0 C1022.3,168.3 1018.8,168.8 1016.0,169.0 C1013.2,169.2 1008.8,170.0 1007.0,168.0 C1005.2,166.0 1004.2,159.2 1005.0,157.0Z" fill="#5a7038"/><path d="M1025.0,172.0 C1025.7,170.3 1028.8,170.7 1031.0,171.0 C1033.2,171.3 1036.5,172.5 1038.0,174.0 C1039.5,175.5 1040.4,178.6 1039.7,180.0 C1039.0,181.4 1036.1,182.3 1034.0,182.5 C1031.9,182.7 1028.5,182.8 1027.0,181.0 C1025.5,179.2 1024.3,173.7 1025.0,172.0Z" fill="#5a7038"/><path d="M1038.0,166.0 C1038.5,164.8 1041.8,164.5 1044.0,165.0 C1046.2,165.5 1050.2,167.7 1051.0,169.0 C1051.8,170.3 1050.7,172.5 1049.0,173.0 C1047.3,173.5 1042.8,173.2 1041.0,172.0 C1039.2,170.8 1037.5,167.2 1038.0,166.0Z" fill="#5a7038"/><path d="M1062.0,192.5 C1062.7,191.6 1065.7,191.2 1066.5,192.0 C1067.3,192.8 1067.7,196.1 1067.0,197.0 C1066.3,197.9 1063.3,198.2 1062.5,197.5 C1061.7,196.8 1061.3,193.4 1062.0,192.5Z" fill="#5a7038"/><path d="M1070.6,458.0 C1071.1,455.9 1073.4,454.8 1075.0,454.5 C1076.6,454.2 1078.7,454.8 1080.0,456.0 C1081.3,457.2 1083.2,460.3 1083.0,462.0 C1082.8,463.7 1080.8,465.2 1079.0,466.0 C1077.2,466.8 1073.4,468.3 1072.0,467.0 C1070.6,465.7 1070.1,460.1 1070.6,458.0Z" fill="#5a7038"/><path d="M1110.0,430.0 C1110.3,427.4 1111.8,424.9 1113.0,424.4 C1114.2,423.9 1115.7,424.9 1117.0,427.0 C1118.3,429.1 1119.9,433.5 1121.0,437.0 C1122.1,440.5 1124.2,445.8 1123.7,448.0 C1123.2,450.2 1119.8,450.2 1118.0,450.0 C1116.2,449.8 1114.2,448.7 1113.0,447.0 C1111.8,445.3 1111.5,442.8 1111.0,440.0 C1110.5,437.2 1109.7,432.6 1110.0,430.0Z" fill="#5a7038"/><path d="M1056.5,574.0 C1056.8,572.3 1058.8,570.2 1060.0,570.0 C1061.2,569.8 1062.7,571.8 1064.0,573.0 C1065.3,574.2 1066.5,577.0 1068.0,577.0 C1069.5,577.0 1071.5,574.2 1073.0,573.0 C1074.5,571.8 1075.9,569.8 1077.0,570.0 C1078.1,570.2 1079.2,572.2 1079.5,574.0 C1079.8,575.8 1079.8,579.5 1079.0,581.0 C1078.2,582.5 1076.3,583.2 1075.0,583.0 C1073.7,582.8 1072.8,580.4 1071.0,580.0 C1069.2,579.6 1066.2,580.5 1064.0,580.5 C1061.8,580.5 1059.2,581.1 1058.0,580.0 C1056.8,578.9 1056.2,575.7 1056.5,574.0Z" fill="#5a7038"/><path d="M1004.7,636.0 C1006.0,636.0 1009.4,643.5 1008.7,645.0 C1008.0,646.5 1001.4,646.5 1000.7,645.0 C1000.0,643.5 1003.4,636.0 1004.7,636.0Z" fill="#5a7038"/><path d="M947.0,452.0 C947.3,450.7 950.0,448.7 951.0,449.0 C952.0,449.3 953.3,452.7 953.0,454.0 C952.7,455.3 950.0,457.3 949.0,457.0 C948.0,456.7 946.7,453.3 947.0,452.0Z" fill="#5a7038"/><path d="M1067.0,519.0 C1068.8,517.7 1075.0,517.9 1078.0,518.2 C1081.0,518.5 1084.0,519.2 1084.8,521.0 C1085.6,522.8 1085.1,527.5 1083.0,529.0 C1080.9,530.5 1074.6,530.2 1072.0,529.7 C1069.4,529.2 1068.3,527.8 1067.5,526.0 C1066.7,524.2 1065.2,520.3 1067.0,519.0Z" fill="#8c8a47"/><path d="M1063.5,535.0 C1065.2,533.0 1071.2,532.8 1075.0,533.0 C1078.8,533.2 1084.8,534.0 1086.5,536.0 C1088.2,538.0 1087.1,543.1 1085.0,545.0 C1082.9,546.9 1077.3,547.4 1074.0,547.4 C1070.7,547.4 1066.8,547.1 1065.0,545.0 C1063.2,542.9 1061.8,537.0 1063.5,535.0Z" fill="#8c8a47"/><path d="M1045.0,417.0 C1047.2,416.7 1055.0,418.5 1060.0,420.0 C1065.0,421.5 1073.0,424.6 1075.0,426.0 C1077.0,427.4 1074.8,428.5 1072.0,428.5 C1069.2,428.5 1062.2,427.1 1058.0,426.0 C1053.8,424.9 1049.2,423.5 1047.0,422.0 C1044.8,420.5 1042.8,417.3 1045.0,417.0Z" fill="#8c8a47"/><path d="M1061.0,650.0 C1062.2,648.3 1065.5,647.3 1068.0,647.6 C1070.5,647.9 1074.7,650.3 1076.0,652.0 C1077.3,653.7 1078.5,657.0 1076.0,658.0 C1073.5,659.0 1063.5,659.3 1061.0,658.0 C1058.5,656.7 1059.8,651.7 1061.0,650.0Z" fill="#8c8a47"/><path d="M1036.0,226.0 C1036.5,224.7 1039.8,223.3 1041.0,224.0 C1042.2,224.7 1043.5,228.7 1043.0,230.0 C1042.5,231.3 1039.2,232.7 1038.0,232.0 C1036.8,231.3 1035.5,227.3 1036.0,226.0Z" fill="#8c8a47"/><path d="M937.5,492.8 C938.5,491.1 942.0,490.6 945.0,490.0 C948.0,489.4 951.8,489.7 955.6,489.5 C959.4,489.3 963.9,488.8 968.0,489.0 C972.1,489.2 977.1,489.3 980.4,490.8 C983.6,492.3 983.7,495.4 987.5,497.8 C991.3,500.2 998.1,503.2 1003.4,505.0 C1008.7,506.8 1015.6,507.0 1019.3,508.5 C1023.0,510.0 1024.6,511.7 1025.5,513.8 C1026.4,515.8 1026.2,518.9 1024.6,520.8 C1023.0,522.7 1019.6,524.4 1015.8,525.3 C1012.0,526.2 1006.0,526.4 1001.6,526.2 C997.2,526.1 993.3,525.7 989.2,524.4 C985.1,523.1 980.9,520.3 976.8,518.2 C972.7,516.1 968.0,513.9 964.5,512.0 C961.0,510.1 958.9,508.3 955.6,506.7 C952.4,505.1 947.8,503.4 945.0,502.3 C942.2,501.2 940.0,501.6 938.8,500.0 C937.5,498.4 936.5,494.5 937.5,492.8Z" fill="#2e7671"/><path d="M962.0,499.0 C962.0,498.3 969.0,497.4 972.0,497.5 C975.0,497.6 980.0,498.8 980.0,499.5 C980.0,500.2 975.0,501.6 972.0,501.5 C969.0,501.4 962.0,499.7 962.0,499.0Z" fill="#3f8079" opacity="0.8"/><ellipse cx="965.7" cy="526.3" rx="5.6" ry="2.6" fill="#2f7888"/><path d="M1068.9,557.0 C1069.1,555.2 1071.0,553.0 1073.0,552.0 C1075.0,551.0 1078.5,550.8 1081.0,551.0 C1083.5,551.2 1087.3,552.0 1088.3,553.5 C1089.3,555.0 1088.4,558.4 1087.0,560.0 C1085.6,561.6 1082.5,562.8 1080.0,563.3 C1077.5,563.8 1073.8,564.0 1072.0,563.0 C1070.2,562.0 1068.7,558.8 1068.9,557.0Z" fill="#2d7d7c"/><path d="M1122.8,439.0 C1124.8,437.3 1133.8,436.4 1136.0,437.7 C1138.2,439.0 1137.0,444.9 1136.0,447.0 C1135.0,449.1 1132.0,449.8 1130.0,450.0 C1128.0,450.2 1125.2,449.8 1124.0,448.0 C1122.8,446.2 1120.8,440.7 1122.8,439.0Z" fill="#2f7a9a"/><path d="M1099.0,283.0 C1099.3,282.0 1101.5,280.3 1103.0,280.0 C1104.5,279.7 1107.5,279.8 1108.0,281.0 C1108.5,282.2 1107.2,286.2 1106.0,287.0 C1104.8,287.8 1102.2,286.7 1101.0,286.0 C1099.8,285.3 1098.7,284.0 1099.0,283.0Z" fill="#2f6a80"/><path d="M1066.5,374 L1066.5,382.6" stroke="#3a7a88" stroke-width="2" fill="none"/><g fill="none" stroke="#5d5a49" stroke-width="0.6" opacity="0.5"><path d="M979.0,165.0 C978.5,168.3 977.2,178.3 976.0,185.0 C974.8,191.7 973.3,198.3 972.0,205.0 C970.7,211.7 968.3,217.5 968.0,225.0 C967.7,232.5 968.8,242.5 970.0,250.0 C971.2,257.5 974.2,266.7 975.0,270.0"/><path d="M979.0,165.0 C982.5,167.2 991.5,173.3 1000.0,178.0 C1008.5,182.7 1021.7,188.7 1030.0,193.0 C1038.3,197.3 1041.7,201.2 1050.0,204.0 C1058.3,206.8 1070.0,208.3 1080.0,210.0 C1090.0,211.7 1098.3,211.0 1110.0,214.0 C1121.7,217.0 1139.7,225.0 1150.0,228.0 C1160.3,231.0 1168.3,231.3 1172.0,232.0"/><path d="M1037.0,200.0 C1037.5,205.0 1041.2,221.7 1040.0,230.0 C1038.8,238.3 1033.3,244.7 1030.0,250.0 C1026.7,255.3 1023.3,257.8 1020.0,262.0 C1016.7,266.2 1011.7,272.8 1010.0,275.0"/><path d="M975.0,270.0 C979.2,268.7 990.8,263.3 1000.0,262.0 C1009.2,260.7 1020.0,261.0 1030.0,262.0 C1040.0,263.0 1050.0,267.5 1060.0,268.0 C1070.0,268.5 1085.0,265.5 1090.0,265.0"/><path d="M1060.0,268.0 C1064.2,265.8 1078.3,259.7 1085.0,255.0 C1091.7,250.3 1094.2,243.8 1100.0,240.0 C1105.8,236.2 1111.7,232.0 1120.0,232.0 C1128.3,232.0 1141.3,237.7 1150.0,240.0 C1158.7,242.3 1168.3,245.0 1172.0,246.0"/><path d="M960.0,407.0 C964.2,407.8 976.7,410.2 985.0,412.0 C993.3,413.8 1000.8,416.5 1010.0,418.0 C1019.2,419.5 1030.0,419.3 1040.0,421.0 C1050.0,422.7 1060.0,425.3 1070.0,428.0 C1080.0,430.7 1091.3,433.3 1100.0,437.0 C1108.7,440.7 1115.3,446.2 1122.0,450.0 C1128.7,453.8 1131.7,456.7 1140.0,460.0 C1148.3,463.3 1166.7,468.3 1172.0,470.0"/><path d="M1100.0,437.0 C1099.2,440.8 1097.0,452.8 1095.0,460.0 C1093.0,467.2 1088.8,471.7 1088.0,480.0 C1087.2,488.3 1088.8,500.0 1090.0,510.0 C1091.2,520.0 1092.5,532.5 1095.0,540.0 C1097.5,547.5 1102.0,551.7 1105.0,555.0 C1108.0,558.3 1111.7,559.2 1113.0,560.0"/><path d="M937.0,503.0 C940.8,504.2 951.2,505.5 960.0,510.0 C968.8,514.5 980.0,524.2 990.0,530.0 C1000.0,535.8 1008.3,541.3 1020.0,545.0 C1031.7,548.7 1048.3,551.5 1060.0,552.0 C1071.7,552.5 1082.5,547.5 1090.0,548.0 C1097.5,548.5 1102.5,553.8 1105.0,555.0"/><path d="M935.0,489.0 C939.2,488.3 950.8,484.8 960.0,485.0 C969.2,485.2 980.0,487.5 990.0,490.0 C1000.0,492.5 1010.0,497.3 1020.0,500.0 C1030.0,502.7 1040.0,503.5 1050.0,506.0 C1060.0,508.5 1072.5,509.3 1080.0,515.0 C1087.5,520.7 1092.5,535.8 1095.0,540.0"/><path d="M1113.0,560.0 C1113.5,563.3 1115.2,573.3 1116.0,580.0 C1116.8,586.7 1119.8,593.3 1118.0,600.0 C1116.2,606.7 1109.7,613.3 1105.0,620.0 C1100.3,626.7 1092.5,636.7 1090.0,640.0"/><path d="M962.0,618.0 C964.2,615.0 971.2,604.7 975.0,600.0 C978.8,595.3 983.3,591.7 985.0,590.0"/><path d="M1010.0,330.0 C1011.7,333.3 1015.0,343.3 1020.0,350.0 C1025.0,356.7 1035.0,362.5 1040.0,370.0 C1045.0,377.5 1046.7,386.7 1050.0,395.0 C1053.3,403.3 1058.3,415.8 1060.0,420.0"/><path d="M972.0,313.0 C975.0,313.8 983.7,315.2 990.0,318.0 C996.3,320.8 1006.7,328.0 1010.0,330.0"/></g><g fill="none" stroke="#615a52" stroke-width="0.6" stroke-dasharray="1.5,1.2" opacity="0.55"><path d="M985.0,326.0 C987.5,327.5 994.2,331.8 1000.0,335.0 C1005.8,338.2 1011.7,344.2 1020.0,345.0 C1028.3,345.8 1041.7,341.3 1050.0,340.0 C1058.3,338.7 1066.7,337.5 1070.0,337.0"/><path d="M1070.0,337.0 C1073.3,339.2 1085.0,343.7 1090.0,350.0 C1095.0,356.3 1095.0,369.2 1100.0,375.0 C1105.0,380.8 1111.7,384.2 1120.0,385.0 C1128.3,385.8 1141.3,381.7 1150.0,380.0 C1158.7,378.3 1168.3,375.8 1172.0,375.0"/><path d="M1070.0,292.0 C1071.7,295.0 1079.2,303.7 1080.0,310.0 C1080.8,316.3 1076.7,325.5 1075.0,330.0 C1073.3,334.5 1070.8,335.8 1070.0,337.0"/><path d="M1017.0,311.0 C1020.8,312.2 1032.8,315.7 1040.0,318.0 C1047.2,320.3 1054.2,323.0 1060.0,325.0 C1065.8,327.0 1072.5,329.2 1075.0,330.0"/><path d="M967.0,412.0 C970.8,410.0 984.5,405.3 990.0,400.0 C995.5,394.7 995.8,386.3 1000.0,380.0 C1004.2,373.7 1008.3,366.2 1015.0,362.0 C1021.7,357.8 1032.5,355.0 1040.0,355.0 C1047.5,355.0 1054.7,363.3 1060.0,362.0 C1065.3,360.7 1070.0,349.5 1072.0,347.0"/><path d="M1095.0,390.0 C1094.2,393.3 1089.2,403.3 1090.0,410.0 C1090.8,416.7 1099.2,424.2 1100.0,430.0 C1100.8,435.8 1095.8,442.5 1095.0,445.0"/><path d="M952.0,455.0 C956.7,454.2 970.3,450.5 980.0,450.0 C989.7,449.5 1000.0,452.3 1010.0,452.0 C1020.0,451.7 1030.0,447.5 1040.0,448.0 C1050.0,448.5 1065.0,453.8 1070.0,455.0"/><path d="M1044.0,556.0 C1044.2,560.0 1046.5,572.7 1045.0,580.0 C1043.5,587.3 1037.5,592.5 1035.0,600.0 C1032.5,607.5 1032.5,618.3 1030.0,625.0 C1027.5,631.7 1021.7,637.5 1020.0,640.0"/></g><path d="M951.0,296.0 L955.0,305.0 L962.5,312.5 L970.0,316.0 L977.5,319.0 L985.0,326.0 L985.0,333.0 L982.5,340.0 L975.0,350.0 L969.0,355.0 L967.5,364.0 L961.0,368.0 L955.0,371.0 L950.0,373.0 L945.0,377.5 L940.0,378.0 L935.0,380.0 L931.0,384.0 L927.5,387.5 L930.0,392.5 L936.0,390.0 L942.5,389.0 L951.0,392.5 L955.0,401.0" fill="none" stroke="#55707a" stroke-width="1.6" opacity="0.75" stroke-linejoin="round"/></g><g clip-path="url(#htclip)"><path d="M738.0,278.3 C741.5,277.4 749.9,274.3 753.0,275.6 C756.1,276.9 757.8,283.1 756.6,286.0 C755.4,288.9 749.5,291.2 746.0,293.0 C742.5,294.8 738.6,294.9 735.4,297.0 C732.1,299.1 729.5,305.4 726.5,305.7 C723.5,306.0 719.2,301.0 717.7,298.6 C716.2,296.2 716.2,293.3 717.7,291.5 C719.2,289.7 724.1,289.8 726.5,288.0 C728.9,286.2 729.9,282.6 731.8,281.0 C733.7,279.4 734.5,279.2 738.0,278.3Z" fill="#c2ccb0"/><path d="M830.0,192.0 C829.7,190.8 833.5,188.2 836.0,187.0 C838.5,185.8 842.2,184.9 845.0,184.5 C847.8,184.1 851.5,183.6 853.0,184.5 C854.5,185.4 855.0,188.7 853.8,190.0 C852.6,191.3 848.6,191.8 846.0,192.5 C843.4,193.2 840.7,194.3 838.0,194.2 C835.3,194.1 830.3,193.2 830.0,192.0Z" fill="#8eb060"/><path d="M833.4,236.0 C833.4,235.0 836.4,227.7 838.0,227.8 C839.6,227.9 843.2,235.7 843.2,236.7 C843.2,237.7 839.6,234.1 838.0,234.0 C836.4,233.9 833.4,237.0 833.4,236.0Z" fill="#8eb060"/><path d="M740.7,318.0 C741.2,315.9 746.8,315.7 750.0,316.0 C753.2,316.3 758.8,318.0 760.0,320.0 C761.2,322.0 759.2,326.6 757.0,328.0 C754.8,329.4 749.7,330.4 747.0,328.7 C744.3,327.0 740.2,320.1 740.7,318.0Z" fill="#bcc87c"/><path d="M758.4,342.0 C759.7,341.0 766.8,340.5 770.0,341.0 C773.2,341.5 777.5,343.8 777.8,345.0 C778.1,346.2 774.6,347.7 772.0,348.0 C769.4,348.3 764.3,348.0 762.0,347.0 C759.7,346.0 757.1,343.0 758.4,342.0Z" fill="#c8cc80"/><path d="M737.0,356.0 C738.7,354.4 744.4,352.9 748.0,352.6 C751.6,352.3 756.9,352.4 758.4,354.0 C759.9,355.6 759.1,360.2 757.0,362.0 C754.9,363.8 749.2,365.0 746.0,365.0 C742.8,365.0 739.5,363.5 738.0,362.0 C736.5,360.5 735.3,357.6 737.0,356.0Z" fill="#b4c878"/><path d="M854.8,390.0 C855.3,388.7 857.5,386.8 859.0,387.0 C860.5,387.2 863.4,389.4 863.7,391.0 C864.0,392.6 862.3,396.1 861.0,396.8 C859.7,397.5 857.0,396.1 856.0,395.0 C855.0,393.9 854.3,391.3 854.8,390.0Z" fill="#c8cc74"/><path d="M883.9,211.0 C884.4,209.7 887.6,209.1 890.0,209.3 C892.4,209.5 897.0,210.4 898.0,212.0 C899.0,213.6 897.8,218.2 896.0,219.0 C894.2,219.8 889.0,218.3 887.0,217.0 C885.0,215.7 883.4,212.3 883.9,211.0Z" fill="#d6cf78"/><path d="M408.0,530.0 C408.0,527.8 411.8,527.3 415.0,527.0 C418.2,526.7 423.9,525.8 427.4,528.0 C430.9,530.2 436.2,537.8 436.2,540.5 C436.2,543.2 429.8,542.1 427.4,544.0 C425.0,545.9 424.1,552.6 422.0,552.0 C419.9,551.4 417.3,544.2 415.0,540.5 C412.7,536.8 408.0,532.2 408.0,530.0Z" fill="#b4c48c"/><path d="M342.5,548.0 C343.0,546.4 348.5,545.3 352.0,545.0 C355.5,544.7 362.7,544.8 363.7,546.0 C364.7,547.2 360.4,550.5 358.0,552.0 C355.6,553.5 351.6,555.4 349.0,554.7 C346.4,554.0 342.0,549.6 342.5,548.0Z" fill="#bccb94"/><path d="M811.0,541.0 C812.2,539.8 818.7,539.8 822.0,540.0 C825.3,540.2 829.8,540.8 831.0,542.0 C832.2,543.2 831.7,546.7 829.0,547.5 C826.3,548.3 818.0,548.1 815.0,547.0 C812.0,545.9 809.8,542.2 811.0,541.0Z" fill="#bccb90"/><path d="M832.5,541.0 C833.0,540.0 835.3,538.8 837.0,538.8 C838.7,538.8 842.0,539.8 842.5,541.0 C843.0,542.2 841.4,545.3 840.0,546.0 C838.6,546.7 835.2,545.8 834.0,545.0 C832.8,544.2 832.0,542.0 832.5,541.0Z" fill="#86ae5e"/><path d="M902.5,540.0 C904.3,538.2 910.4,537.5 915.0,537.5 C919.6,537.5 927.8,537.8 930.0,540.0 C932.2,542.2 931.0,548.9 928.0,551.0 C925.0,553.1 916.0,553.0 912.0,552.5 C908.0,552.0 905.6,550.1 904.0,548.0 C902.4,545.9 900.7,541.8 902.5,540.0Z" fill="#c6d09e"/><path d="M940.0,544.0 C940.7,542.7 945.1,540.8 948.0,541.0 C950.9,541.2 956.7,543.3 957.5,545.0 C958.3,546.7 955.2,550.3 953.0,551.0 C950.8,551.7 946.2,550.2 944.0,549.0 C941.8,547.8 939.3,545.3 940.0,544.0Z" fill="#8eb462"/><path d="M790.0,480.0 C790.3,478.3 797.3,477.3 800.0,478.0 C802.7,478.7 806.3,482.3 806.0,484.0 C805.7,485.7 800.7,488.7 798.0,488.0 C795.3,487.3 789.7,481.7 790.0,480.0Z" fill="#c8d098"/><path d="M825.0,474.0 C826.7,472.0 835.8,469.7 840.0,470.0 C844.2,470.3 849.7,473.7 850.0,476.0 C850.3,478.3 845.3,483.0 842.0,484.0 C838.7,485.0 832.8,483.7 830.0,482.0 C827.2,480.3 823.3,476.0 825.0,474.0Z" fill="#d0d4a0"/><path d="M693.0,112.0 C693.3,111.1 696.1,110.2 697.0,110.5 C697.9,110.8 698.8,113.1 698.5,114.0 C698.2,114.9 695.9,116.3 695.0,116.0 C694.1,115.7 692.7,112.9 693.0,112.0Z" fill="#8eb462"/><path d="M799.0,224.0 C799.5,223.3 802.2,222.7 803.0,223.0 C803.8,223.3 804.5,225.3 804.0,226.0 C803.5,226.7 800.8,227.3 800.0,227.0 C799.2,226.7 798.5,224.7 799.0,224.0Z" fill="#a6c070"/><g fill="none" stroke="#a9d3cc" stroke-width="0.7" opacity="0.75"><path d="M726.0,306.0 C729.2,307.0 738.5,309.3 745.0,312.0 C751.5,314.7 758.3,318.2 765.0,322.0 C771.7,325.8 778.3,331.2 785.0,335.0 C791.7,338.8 798.3,342.5 805.0,345.0 C811.7,347.5 818.3,347.2 825.0,350.0 C831.7,352.8 838.3,357.0 845.0,362.0 C851.7,367.0 858.3,374.5 865.0,380.0 C871.7,385.5 880.5,391.3 885.0,395.0 C889.5,398.7 890.8,400.8 892.0,402.0"/><path d="M892.0,402.0 C894.2,400.3 900.3,395.7 905.0,392.0 C909.7,388.3 915.8,384.5 920.0,380.0 C924.2,375.5 926.7,370.0 930.0,365.0 C933.3,360.0 936.7,354.2 940.0,350.0 C943.3,345.8 948.3,341.7 950.0,340.0"/><path d="M860.0,300.0 C861.7,303.3 866.7,313.3 870.0,320.0 C873.3,326.7 876.7,333.3 880.0,340.0 C883.3,346.7 887.5,353.3 890.0,360.0 C892.5,366.7 894.2,376.7 895.0,380.0"/><path d="M800.0,290.0 C802.5,292.5 810.0,300.0 815.0,305.0 C820.0,310.0 825.8,315.0 830.0,320.0 C834.2,325.0 838.3,332.5 840.0,335.0"/><path d="M700.0,148.0 C700.8,150.0 702.5,155.5 705.0,160.0 C707.5,164.5 712.2,170.0 715.0,175.0 C717.8,180.0 718.7,185.8 722.0,190.0 C725.3,194.2 732.8,198.3 735.0,200.0"/><path d="M855.0,200.0 C855.8,202.5 857.5,209.2 860.0,215.0 C862.5,220.8 866.7,229.2 870.0,235.0 C873.3,240.8 878.3,247.5 880.0,250.0"/><path d="M905.0,205.0 C905.5,208.3 906.3,218.3 908.0,225.0 C909.7,231.7 914.3,238.8 915.0,245.0 C915.7,251.2 912.5,259.2 912.0,262.0"/><path d="M385.0,462.0 C385.5,465.0 388.0,473.7 388.0,480.0 C388.0,486.3 386.7,494.2 385.0,500.0 C383.3,505.8 380.2,510.0 378.0,515.0 C375.8,520.0 373.0,527.5 372.0,530.0"/><path d="M400.0,470.0 C400.8,473.3 402.5,484.2 405.0,490.0 C407.5,495.8 412.5,500.0 415.0,505.0 C417.5,510.0 419.2,517.5 420.0,520.0"/><path d="M345.0,475.0 C346.2,478.3 351.2,488.3 352.0,495.0 C352.8,501.7 351.2,508.3 350.0,515.0 C348.8,521.7 345.8,531.7 345.0,535.0"/><path d="M468.0,528.0 C469.0,530.8 472.3,539.7 474.0,545.0 C475.7,550.3 476.7,555.2 478.0,560.0 C479.3,564.8 481.3,571.7 482.0,574.0"/><path d="M455.0,540.0 C455.8,542.5 458.2,550.0 460.0,555.0 C461.8,560.0 464.3,565.0 466.0,570.0 C467.7,575.0 469.3,582.5 470.0,585.0"/><path d="M690.0,540.0 C691.7,542.5 696.3,550.0 700.0,555.0 C703.7,560.0 709.0,565.0 712.0,570.0 C715.0,575.0 717.0,582.5 718.0,585.0"/><path d="M735.0,530.0 C733.8,532.5 730.2,540.0 728.0,545.0 C725.8,550.0 723.3,554.2 722.0,560.0 C720.7,565.8 720.3,576.7 720.0,580.0"/><path d="M835.0,490.0 C837.5,491.7 844.2,497.5 850.0,500.0 C855.8,502.5 863.3,505.0 870.0,505.0 C876.7,505.0 886.7,500.8 890.0,500.0"/><path d="M610.0,515.0 C609.2,517.5 607.5,525.8 605.0,530.0 C602.5,534.2 596.7,538.3 595.0,540.0"/></g><g fill="none" stroke="#b3a992" stroke-width="0.7" stroke-dasharray="1.6,1.2" opacity="0.8"><path d="M633.2,223.5 C633.1,222.3 632.0,219.3 632.3,216.4 C632.6,213.5 633.4,208.8 635.0,205.8 C636.6,202.9 639.1,200.5 642.0,198.7 C644.9,196.9 648.5,195.2 652.6,195.0 C656.7,194.8 662.1,196.8 666.8,197.8 C671.5,198.9 676.3,200.6 681.0,201.3 C685.7,202.0 690.9,202.9 695.0,202.2 C699.1,201.5 702.7,199.1 705.7,197.0 C708.7,194.9 709.6,190.1 712.8,189.8 C716.0,189.5 720.5,192.5 725.0,195.0 C729.5,197.5 735.5,201.7 740.0,205.0 C744.5,208.3 747.8,211.7 752.0,215.0 C756.2,218.3 761.2,220.8 765.0,225.0 C768.8,229.2 773.3,237.5 775.0,240.0"/><path d="M775.0,240.0 C777.5,241.7 785.0,247.5 790.0,250.0 C795.0,252.5 800.0,253.0 805.0,255.0 C810.0,257.0 815.0,258.7 820.0,262.0 C825.0,265.3 829.9,268.3 835.0,275.0 C840.1,281.7 849.6,293.9 850.4,302.0 C851.2,310.1 841.9,317.8 839.8,323.4 C837.7,329.0 836.8,332.0 838.0,335.8 C839.2,339.6 846.0,341.7 846.9,346.4 C847.8,351.1 844.2,358.4 843.3,364.0 C842.4,369.6 841.2,374.7 841.5,380.0 C841.8,385.3 845.0,391.0 845.0,396.0 C845.0,401.0 844.0,405.2 841.5,410.0 C839.0,414.8 834.4,420.8 830.0,425.0 C825.6,429.2 820.0,431.7 815.0,435.0 C810.0,438.3 804.2,443.7 800.0,445.0 C795.8,446.3 791.7,443.3 790.0,443.0"/><path d="M775.0,240.0 C776.7,237.5 780.8,229.2 785.0,225.0 C789.2,220.8 795.0,218.3 800.0,215.0 C805.0,211.7 811.3,208.2 815.0,205.0 C818.7,201.8 820.8,197.5 822.0,196.0"/><path d="M850.4,302.0 C853.7,300.8 863.4,297.8 870.0,295.0 C876.6,292.2 884.2,289.2 890.0,285.0 C895.8,280.8 900.0,273.8 905.0,270.0 C910.0,266.2 914.2,264.5 920.0,262.0 C925.8,259.5 933.3,257.0 940.0,255.0 C946.7,253.0 955.0,250.0 960.0,250.0 C965.0,250.0 968.3,254.2 970.0,255.0"/><path d="M905.0,270.0 C904.2,266.7 901.7,255.8 900.0,250.0 C898.3,244.2 895.3,240.0 895.0,235.0 C894.7,230.0 897.8,225.3 898.0,220.0 C898.2,214.7 896.3,205.8 896.0,203.0"/><path d="M841.5,410.0 C844.6,411.7 853.6,416.7 860.0,420.0 C866.4,423.3 873.3,426.7 880.0,430.0 C886.7,433.3 893.3,437.5 900.0,440.0 C906.7,442.5 912.5,442.5 920.0,445.0 C927.5,447.5 940.8,453.3 945.0,455.0"/><path d="M423.9,480.4 C424.5,482.8 425.6,490.1 427.4,494.5 C429.2,498.9 431.0,503.4 434.5,507.0 C438.0,510.6 445.4,512.6 448.6,515.8 C451.9,519.0 453.4,522.9 454.0,526.4 C454.6,529.9 452.3,535.2 452.0,537.0"/><path d="M452.0,537.0 C455.0,536.7 463.7,535.8 470.0,535.0 C476.3,534.2 483.3,533.2 490.0,532.0 C496.7,530.8 503.3,529.2 510.0,528.0 C516.7,526.8 523.3,525.8 530.0,525.0 C536.7,524.2 543.3,523.8 550.0,523.0 C556.7,522.2 563.3,520.8 570.0,520.0 C576.7,519.2 583.3,518.7 590.0,518.0 C596.7,517.3 603.3,517.0 610.0,516.0 C616.7,515.0 626.7,512.7 630.0,512.0"/><path d="M636.8,537.2 C638.6,539.0 644.2,543.1 647.4,547.8 C650.6,552.5 653.9,560.2 656.2,565.5 C658.6,570.8 660.6,577.3 661.5,579.7"/><path d="M636.8,537.2 C637.3,535.2 639.0,528.5 640.0,525.0 C641.0,521.5 642.5,517.5 643.0,516.0"/><path d="M745.0,500.0 C746.2,502.5 749.5,510.0 752.0,515.0 C754.5,520.0 756.2,525.8 760.0,530.0 C763.8,534.2 770.0,537.0 775.0,540.0 C780.0,543.0 784.2,546.0 790.0,548.0 C795.8,550.0 803.0,552.9 810.0,552.0 C817.0,551.1 828.3,544.1 832.0,542.5"/><path d="M832.5,542.5 C835.4,541.8 843.8,539.2 850.0,538.0 C856.2,536.8 863.3,536.3 870.0,535.0 C876.7,533.7 884.2,532.2 890.0,530.0 C895.8,527.8 899.8,524.7 905.0,522.0 C910.2,519.3 918.3,515.3 921.0,514.0"/></g><g fill="none" stroke="#d7ae88" stroke-width="0.75" opacity="0.75"><path d="M735.8,266.8 C737.3,265.5 742.2,262.0 744.6,258.9 C747.0,255.8 750.0,252.9 750.0,248.2 C750.0,243.5 746.4,236.1 744.6,230.5 C742.8,224.9 740.8,218.7 739.3,214.6 C737.8,210.5 737.8,209.1 735.8,205.8 C733.8,202.5 730.8,198.0 727.0,195.0 C723.2,192.0 715.8,190.0 712.8,188.0 C709.8,186.0 710.4,185.7 709.2,182.8 C708.0,179.9 706.9,174.5 705.7,170.4 C704.5,166.3 703.1,161.8 702.2,158.0 C701.3,154.2 700.7,149.2 700.4,147.4"/><path d="M744.6,258.9 C747.0,257.4 752.9,251.8 758.8,250.0 C764.7,248.2 773.1,247.7 780.0,248.0 C786.9,248.3 794.2,250.3 800.0,252.0 C805.8,253.7 810.0,256.3 815.0,258.0 C820.0,259.7 824.4,261.7 830.0,262.0 C835.6,262.3 845.4,260.1 848.5,259.7"/><path d="M739.3,214.6 C741.7,214.0 749.7,210.1 753.5,211.0 C757.3,211.9 759.3,216.8 762.3,220.0 C765.2,223.2 768.2,227.0 771.2,230.5 C774.2,234.0 778.0,239.7 780.0,241.0 C782.0,242.3 782.5,238.9 783.0,238.5"/><path d="M852.0,197.8 C852.6,199.8 855.5,206.2 855.5,210.0 C855.5,213.8 852.0,217.8 852.0,220.8 C852.0,223.8 856.7,224.9 855.5,227.8 C854.3,230.8 847.4,235.0 845.0,238.5 C842.6,242.0 840.8,245.5 841.4,249.0 C842.0,252.5 846.7,255.9 848.5,259.7 C850.3,263.5 850.2,267.9 852.0,272.0 C853.8,276.1 856.7,280.7 859.0,284.5 C861.3,288.3 862.5,291.9 866.0,295.0 C869.5,298.1 876.4,300.9 880.0,303.0 C883.6,305.1 885.4,304.1 887.5,307.5 C889.6,310.9 891.3,317.5 892.9,323.4 C894.5,329.3 895.5,336.6 897.3,342.8 C899.1,349.0 901.4,355.2 903.5,360.5 C905.6,365.8 909.7,370.0 909.7,374.7 C909.7,379.4 905.1,384.8 903.5,388.9 C901.9,393.0 902.2,396.0 900.0,399.5 C897.8,403.0 893.3,406.6 890.0,410.0 C886.7,413.4 883.3,416.3 880.0,420.0 C876.7,423.7 873.3,427.8 870.0,432.0 C866.7,436.2 864.2,441.2 860.0,445.0 C855.8,448.8 850.0,451.7 845.0,455.0 C840.0,458.3 833.2,461.7 830.0,465.0 C826.8,468.3 826.7,473.3 826.0,475.0"/><path d="M852.0,197.8 C854.4,198.7 862.7,201.0 866.2,203.0 C869.7,205.0 870.2,207.6 873.2,210.0 C876.2,212.4 879.8,215.4 883.9,217.2 C888.0,219.0 892.7,220.2 898.0,220.8 C903.3,221.4 909.8,221.1 915.7,220.8 C921.6,220.5 928.7,217.8 933.4,219.0 C938.1,220.2 940.5,224.6 944.0,227.8 C947.5,231.1 951.4,236.1 954.6,238.5 C957.9,240.9 962.0,241.4 963.5,242.0"/><path d="M760.0,242.0 C761.8,243.2 766.5,246.3 770.6,249.0 C774.7,251.7 781.3,258.0 784.8,258.0 C788.3,258.0 792.1,252.2 791.8,249.0 C791.5,245.8 783.6,242.0 783.0,238.5 C782.4,235.0 785.6,231.4 788.3,227.8 C791.0,224.2 796.6,221.3 799.0,217.2 C801.4,213.1 799.6,205.7 802.5,203.0 C805.4,200.3 811.3,201.3 816.6,201.3 C821.9,201.3 828.4,203.6 834.3,203.0 C840.2,202.4 849.0,198.7 852.0,197.8"/><path d="M738.0,267.6 C741.4,269.5 754.6,275.0 758.4,279.0 C762.2,283.0 761.3,287.5 761.0,291.5 C760.7,295.5 757.2,298.6 756.6,303.0 C756.0,307.4 757.8,311.7 757.5,318.0 C757.2,324.3 757.6,336.9 754.8,341.0 C752.0,345.1 743.9,341.0 740.7,342.8 C737.5,344.6 737.5,348.8 735.4,351.7 C733.3,354.6 730.1,357.6 728.3,360.5 C726.5,363.4 725.7,366.4 724.8,369.4 C723.9,372.3 721.8,374.9 723.0,378.2 C724.2,381.4 728.3,385.3 731.8,388.9 C735.3,392.4 740.7,396.3 744.2,399.5 C747.7,402.7 750.0,404.9 753.0,408.3 C756.0,411.7 758.8,415.9 762.0,420.0 C765.2,424.1 768.2,429.7 772.0,433.0 C775.8,436.3 780.3,437.7 785.0,440.0 C789.7,442.3 795.0,444.5 800.0,447.0 C805.0,449.5 811.3,452.5 815.0,455.0 C818.7,457.5 820.2,458.7 822.0,462.0 C823.8,465.3 825.3,472.8 826.0,475.0"/><path d="M754.8,341.0 C757.3,341.7 765.0,343.2 770.0,345.0 C775.0,346.8 780.0,349.5 785.0,352.0 C790.0,354.5 795.0,356.7 800.0,360.0 C805.0,363.3 810.0,367.8 815.0,372.0 C820.0,376.2 825.0,381.0 830.0,385.0 C835.0,389.0 842.5,394.2 845.0,396.0"/><path d="M897.3,342.8 C900.2,342.3 908.7,339.6 915.0,340.0 C921.3,340.4 929.2,343.3 935.0,345.0 C940.8,346.7 945.0,348.8 950.0,350.0 C955.0,351.2 962.5,351.7 965.0,352.0"/><path d="M887.5,307.5 C889.6,305.9 895.4,300.9 900.0,298.0 C904.6,295.1 910.0,293.0 915.0,290.0 C920.0,287.0 925.0,283.0 930.0,280.0 C935.0,277.0 940.0,274.0 945.0,272.0 C950.0,270.0 955.5,269.0 960.0,268.0 C964.5,267.0 970.0,266.3 972.0,266.0"/><path d="M826.0,475.0 C828.3,475.5 834.3,476.8 840.0,478.0 C845.7,479.2 853.3,480.7 860.0,482.0 C866.7,483.3 873.3,485.5 880.0,486.0 C886.7,486.5 894.7,485.0 900.0,485.0 C905.3,485.0 910.0,485.8 912.0,486.0"/><path d="M826.0,475.0 C823.3,476.2 815.2,479.5 810.0,482.0 C804.8,484.5 800.0,488.0 795.0,490.0 C790.0,492.0 784.2,493.2 780.0,494.0 C775.8,494.8 773.7,494.3 770.0,495.0 C766.3,495.7 761.6,494.8 758.0,498.0 C754.4,501.2 752.5,510.1 748.2,514.0 C743.9,517.9 737.9,519.8 732.3,521.3 C726.7,522.8 721.7,522.9 714.6,523.0 C707.5,523.1 696.9,522.2 689.8,522.2 C682.7,522.2 677.9,523.1 672.0,523.0 C666.1,522.9 659.2,521.3 654.5,521.3 C649.8,521.3 646.3,521.5 643.9,523.0 C641.5,524.5 643.3,527.6 640.3,530.0 C637.3,532.4 630.7,535.6 626.0,537.2 C621.3,538.9 616.7,539.9 612.0,539.9 C607.3,539.9 603.1,537.7 597.8,537.2 C592.5,536.8 587.1,536.3 580.0,537.2 C572.9,538.1 563.6,541.5 555.4,542.5 C547.2,543.5 537.3,542.5 530.6,543.4 C523.9,544.3 520.1,545.9 515.0,548.0 C509.9,550.1 504.2,553.0 500.0,556.0 C495.8,559.0 492.7,562.4 490.0,566.0 C487.3,569.6 485.0,575.8 484.0,577.7"/><path d="M597.8,540.0 C596.6,541.6 594.0,547.1 590.8,549.6 C587.6,552.1 581.9,553.8 578.4,555.0 C574.9,556.2 571.0,556.4 569.5,556.7"/><path d="M423.9,480.4 C424.5,482.8 425.6,490.1 427.4,494.5 C429.2,498.9 431.0,503.4 434.5,507.0 C438.0,510.6 445.4,512.6 448.6,515.8 C451.9,519.0 453.4,522.9 454.0,526.4 C454.6,529.9 450.5,533.5 452.0,537.0 C453.5,540.5 459.0,544.6 462.8,547.6 C466.6,550.6 472.1,551.2 475.0,554.7 C477.9,558.2 479.0,565.1 480.5,568.9 C482.0,572.7 483.4,576.2 484.0,577.7"/><path d="M354.8,530.0 C358.1,529.7 368.1,528.5 374.3,528.0 C380.5,527.5 386.1,527.7 392.0,527.3 C397.9,526.9 403.8,524.5 409.7,525.5 C415.6,526.5 422.1,531.8 427.4,533.5 C432.7,535.2 437.1,535.4 441.5,536.0 C445.9,536.6 451.9,536.8 454.0,537.0"/><path d="M454.0,526.4 C457.8,525.8 468.8,523.7 477.0,522.8 C485.2,521.9 494.7,521.0 503.5,521.0 C512.3,521.0 523.1,521.3 530.0,522.8 C536.9,524.3 540.8,526.7 545.0,530.0 C549.2,533.3 553.7,540.4 555.4,542.5"/><path d="M795.0,490.0 C795.8,492.5 798.3,500.0 800.0,505.0 C801.7,510.0 802.5,515.0 805.0,520.0 C807.5,525.0 811.7,530.3 815.0,535.0 C818.3,539.7 822.7,543.8 825.0,548.0 C827.3,552.2 828.3,556.2 829.0,560.0 C829.7,563.8 829.0,569.2 829.0,571.0"/><path d="M829.0,560.0 C832.5,560.3 843.2,561.2 850.0,562.0 C856.8,562.8 863.3,564.0 870.0,565.0 C876.7,566.0 885.0,566.3 890.0,568.0 C895.0,569.7 898.3,573.8 900.0,575.0"/><path d="M484.0,577.7 C482.5,579.8 477.3,586.3 475.0,590.0 C472.7,593.7 470.5,596.3 470.0,600.0 C469.5,603.7 471.7,610.0 472.0,612.0"/><path d="M423.9,480.4 C421.6,479.3 414.8,476.1 410.0,474.0 C405.2,471.9 400.0,469.8 395.0,468.0 C390.0,466.2 385.8,463.8 380.0,463.0 C374.2,462.2 365.8,462.5 360.0,463.0 C354.2,463.5 350.0,464.5 345.0,466.0 C340.0,467.5 332.5,471.0 330.0,472.0"/></g><path d="M884.0,472.0 C884.8,470.4 887.5,467.0 889.5,467.0 C891.5,467.0 893.5,470.0 895.7,472.0 C898.0,474.0 900.5,476.6 903.0,479.0 C905.5,481.4 907.8,483.7 910.5,486.6 C913.2,489.5 916.3,493.8 919.0,496.5 C921.7,499.2 925.7,501.3 926.5,502.6 C927.3,503.9 926.2,504.0 924.0,504.5 C921.8,505.0 915.7,507.0 913.0,505.7 C910.3,504.4 909.8,498.4 908.0,496.5 C906.2,494.6 905.1,494.8 902.0,494.0 C898.9,493.2 891.8,493.6 889.5,491.5 C887.2,489.4 889.1,484.1 888.3,481.7 C887.5,479.2 885.3,478.4 884.6,476.8 C883.9,475.2 883.2,473.6 884.0,472.0Z" fill="#45bfd6"/><path d="M912.0,488.0 C912.8,489.2 918.5,495.5 921.0,498.0 C923.5,500.5 926.5,502.7 927.0,503.0 C927.5,503.3 925.8,502.0 924.0,500.0 C922.2,498.0 918.0,493.0 916.0,491.0 C914.0,489.0 911.2,486.8 912.0,488.0Z" fill="#9cd7d6"/><path d="M890.0,403.0 C890.5,401.8 893.8,400.3 896.0,400.0 C898.2,399.7 901.5,400.2 903.0,401.0 C904.5,401.8 903.5,404.5 905.0,405.0 C906.5,405.5 910.2,403.5 912.0,404.0 C913.8,404.5 914.3,407.7 916.0,408.0 C917.7,408.3 920.2,405.8 922.0,406.0 C923.8,406.2 926.5,407.7 927.0,409.0 C927.5,410.3 926.5,413.0 925.0,414.0 C923.5,415.0 920.2,415.5 918.0,415.0 C915.8,414.5 914.0,411.5 912.0,411.0 C910.0,410.5 908.0,412.5 906.0,412.0 C904.0,411.5 902.2,408.8 900.0,408.0 C897.8,407.2 894.7,407.8 893.0,407.0 C891.3,406.2 889.5,404.2 890.0,403.0Z" fill="#56c2ce"/><path d="M644.7,527.0 C645.0,525.6 647.5,524.4 650.0,524.0 C652.5,523.6 657.5,524.7 659.8,524.5 C662.1,524.3 662.4,523.1 664.0,523.0 C665.6,522.9 668.8,523.1 669.5,524.0 C670.2,524.9 669.6,527.5 668.0,528.4 C666.4,529.3 661.8,528.8 660.0,529.5 C658.2,530.2 659.0,532.3 657.0,532.8 C655.0,533.3 650.0,533.5 648.0,532.5 C646.0,531.5 644.4,528.4 644.7,527.0Z" fill="#43b9d0"/><path d="M921.9,209.0 C922.7,207.9 927.3,207.5 930.0,207.5 C932.7,207.5 935.8,208.1 938.0,209.0 C940.2,209.9 942.7,211.6 943.0,213.0 C943.3,214.4 941.8,217.0 940.0,217.3 C938.2,217.6 934.5,215.6 932.0,215.0 C929.5,214.4 926.7,215.0 925.0,214.0 C923.3,213.0 921.1,210.1 921.9,209.0Z" fill="#4b99b9"/><path d="M880.3,199.0 C880.6,197.4 884.2,197.0 886.0,197.0 C887.8,197.0 890.3,197.7 891.0,199.0 C891.7,200.3 891.2,203.7 890.0,205.0 C888.8,206.3 885.6,207.6 884.0,206.6 C882.4,205.6 880.0,200.6 880.3,199.0Z" fill="#8bcdd2"/><path d="M900.7,199.0 C901.2,197.9 904.2,197.0 906.0,197.0 C907.8,197.0 910.8,197.8 911.3,199.0 C911.8,200.2 910.4,203.2 909.0,204.0 C907.6,204.8 904.4,204.3 903.0,203.5 C901.6,202.7 900.2,200.1 900.7,199.0Z" fill="#8bcdd2"/><path d="M920.0,201.5 C920.5,200.8 925.2,200.3 928.0,200.4 C930.8,200.5 935.8,201.3 937.0,202.0 C938.2,202.7 937.0,204.4 935.0,204.8 C933.0,205.2 927.5,205.1 925.0,204.5 C922.5,203.9 919.5,202.2 920.0,201.5Z" fill="#8bcdd2"/><path d="M944.0,210.0 C944.5,209.4 947.9,209.2 950.0,209.3 C952.1,209.4 955.7,209.8 956.4,210.5 C957.1,211.2 955.6,213.3 954.0,213.7 C952.4,214.1 948.7,213.6 947.0,213.0 C945.3,212.4 943.5,210.6 944.0,210.0Z" fill="#8bcdd2"/><ellipse cx="878" cy="470.5" rx="3.5" ry="1.8" fill="#52c4cf"/><path d="M818.5,188.0 C818.8,186.6 820.2,186.2 821.0,186.5 C821.8,186.8 822.3,188.2 823.0,190.0 C823.7,191.8 824.8,194.8 825.0,197.0 C825.2,199.2 824.8,202.2 824.0,203.0 C823.2,203.8 821.3,203.3 820.5,202.0 C819.7,200.7 819.3,197.3 819.0,195.0 C818.7,192.7 818.2,189.4 818.5,188.0Z" fill="#2e5560"/><path d="M526.0,566.0 C526.3,564.1 529.2,563.0 531.0,563.0 C532.8,563.0 536.2,564.1 537.0,566.0 C537.8,567.9 537.3,573.0 536.0,574.4 C534.7,575.8 530.7,575.8 529.0,574.4 C527.3,573.0 525.7,567.9 526.0,566.0Z" fill="#2e5560"/><path d="M544.8,566.0 C545.1,563.9 547.8,561.6 550.0,561.0 C552.2,560.4 555.8,561.7 558.0,562.5 C560.2,563.3 562.6,564.2 563.3,566.0 C564.0,567.8 564.5,572.2 562.0,573.5 C559.5,574.8 550.9,574.8 548.0,573.5 C545.1,572.2 544.5,568.1 544.8,566.0Z" fill="#2e5560"/><path d="M567.0,563.0 C567.5,560.6 570.3,559.7 572.0,559.3 C573.7,558.9 575.8,559.4 577.0,560.5 C578.2,561.6 579.3,563.8 579.3,566.0 C579.3,568.2 578.7,572.2 577.0,573.5 C575.3,574.8 570.7,575.2 569.0,573.5 C567.3,571.8 566.5,565.4 567.0,563.0Z" fill="#2e5560"/><path d="M725.0,268.0 C725.3,266.8 727.5,265.7 729.0,266.0 C730.5,266.3 733.3,267.7 734.0,270.0 C734.7,272.3 734.0,278.3 733.0,280.0 C732.0,281.7 729.0,281.2 728.0,280.0 C727.0,278.8 727.5,275.0 727.0,273.0 C726.5,271.0 724.7,269.2 725.0,268.0Z" fill="#2e5560"/><g class="lbl" font-size="3.4px" fill="#2fb3c4" font-weight="bold"><text x="324.8" y="476.0">Anse</text><text x="318.6" y="509.5">Baie des Irois</text><text x="314.0" y="519.5">Anse à Cochon</text><text x="314.0" y="523.5">Petite Anse</text><text x="319.5" y="528.0">Anse</text><text x="319.5" y="536.0">Baie de Tiburon</text><text x="335.4" y="549.5">Port-à-Piment</text><text x="520.0" y="566.0">Baie des Flamands</text><text x="575.0" y="566.0">Baie d'Aquin</text><text x="641.0" y="154.0">Baie des Moustiques</text><text x="693.0" y="147.8">Baie</text><text x="745.0" y="583.0">Baie de Jacmel</text><text x="746.0" y="577.0">Baie</text><text x="446.0" y="614.0">Anse</text><text x="458.0" y="617.0">Baie Grosse</text><text x="752.0" y="410.5">Baie</text><text x="738.0" y="270.5">Baie de Grand Pierre</text></g><path d="M956.0,204.0 L960.0,215.0 L959.0,225.0 L963.0,233.0 L967.5,240.0 L970.0,255.0 L972.5,265.0 L974.0,280.0 L967.5,289.0 L958.0,293.0 L951.0,296.0 L955.0,305.0 L962.5,312.5 L970.0,316.0 L977.5,319.0 L985.0,326.0 L985.0,333.0 L982.5,340.0 L975.0,350.0 L969.0,355.0 L967.5,364.0 L961.0,368.0 L955.0,371.0 L950.0,373.0 L945.0,377.5 L940.0,378.0 L935.0,380.0 L931.0,384.0 L927.5,387.5 L930.0,392.5 L936.0,390.0 L942.5,389.0 L951.0,392.5 L955.0,401.0 L964.0,407.5 L967.5,412.5 L964.0,425.0 L964.6,430.0 L962.0,448.5 L951.0,452.8 L946.0,458.0 L945.0,468.0 L939.0,469.4 L931.4,470.0 L924.0,467.0 L918.0,468.8 L908.0,465.0 L898.0,473.0 L907.0,478.0 L913.0,486.6 L927.7,502.6 L921.5,507.5 L922.8,513.7 L934.0,521.0 L941.0,528.5 L945.0,530.0 L960.0,537.5 L971.0,544.0 L967.5,550.0 L962.5,560.0 L957.5,570.0 L950.0,582.5 L955.0,587.5 L960.0,602.5 L962.5,617.5" fill="none" stroke="#eceacf" stroke-width="2.4" opacity="0.55" stroke-linejoin="round"/><path d="M922.5,514 L832.5,542.5 L824,555 L829,571 M924,515 L900,576" fill="none" stroke="#557366" stroke-width="0.9"/><g class="lbl" font-size="3.3px" fill="#3a382e" opacity="0.85"><text x="600.4" y="171.0">Jean-Rabel</text><text x="604.0" y="179.3">Mare Rouge</text><text x="585.4" y="206.8">Bombardopolis</text><text x="614.6" y="213.5">Baie de Henne</text><text x="651.2" y="221.8">Anse-Rouge</text><text x="704.0" y="160.0">Chansolme</text><text x="712.0" y="184.7">Bassin-Bleu</text><text x="740.2" y="212.0">Gros Morne</text><text x="716.3" y="229.4">Terre-Neuve</text><text x="738.4" y="267.8">Les Gonaïves</text><text x="576.5" y="173.0">Môle Saint-</text><text x="577.0" y="177.0">Nicolas</text><text x="809.0" y="187.0">Bas</text><text x="803.0" y="203.0">Limbé</text><text x="790.0" y="230.0">Plaisance</text><text x="785.0" y="258.0">Ennery</text><text x="848.0" y="227.0">Milot</text><text x="864.0" y="203.5">Quartier Morin</text><text x="868.0" y="212.0">Limonade</text><text x="895.0" y="225.0">Trou-du-Nord</text><text x="916.0" y="234.5">Grand Bassin</text><text x="860.0" y="239.0">Grande Rivière</text><text x="860.0" y="243.5">du Nord</text><text x="843.0" y="247.0">Dondon</text><text x="873.0" y="261.5">Bahon</text><text x="853.0" y="269.0">Saint-Raphaël</text><text x="880.0" y="275.5">Ranquitte</text><text x="904.0" y="286.5">Mombin Crochu</text><text x="940.0" y="283.5">Carice</text><text x="952.0" y="276.0">Mont-Organisé</text><text x="822.0" y="281.0">Saint-Michel</text><text x="823.0" y="285.5">de l'Attalaye</text><text x="872.0" y="294.0">Pignon</text><text x="867.0" y="335.0">Maïssade</text><text x="899.0" y="342.0">Hinche</text><text x="910.0" y="374.0">Thomonde</text><text x="757.0" y="303.0">L'Estère</text><text x="778.0" y="313.5">Dessalines</text><text x="784.0" y="329.5">Desarmes</text><text x="730.0" y="309.5">Desdunes</text><text x="718.0" y="317.5">Grande Saline</text><text x="755.0" y="341.5">Pont Sondé</text><text x="773.0" y="347.0">Liancourt</text><text x="784.0" y="359.5">Verrettes</text><text x="790.0" y="366.0">Deschapelles</text><text x="735.4" y="353.0">Saint-Marc</text><text x="733.0" y="362.5">Montrouis</text><text x="728.0" y="368.5">Carries</text><text x="827.0" y="400.5">La Chapelle</text><text x="876.0" y="419.0">Mirebalais</text><text x="903.0" y="394.5">Cange</text><text x="914.0" y="420.0">Lascahobas</text><text x="940.0" y="415.0">Belladère</text><text x="813.0" y="448.0">Cabaret</text><text x="789.0" y="444.0">Arcahaie</text><text x="870.0" y="456.0">Thomazeau</text><text x="912.0" y="458.0">Cornillon</text><text x="640.0" y="413.5">Grand Lagon</text><text x="648.0" y="431.0">Pointe à Raquette</text><text x="663.0" y="397.0">Anse-à-Galets</text><text x="822.0" y="482.0">Cité Soleil</text><text x="831.0" y="487.5">Delmas</text><text x="832.0" y="499.0">Pétion-Ville</text><text x="760.0" y="491.0">Léogâne</text><text x="777.0" y="568.0">Jacmel</text><text x="886.0" y="567.0">Belle-Anse</text><text x="921.0" y="580.0">Grand Gosier</text><text x="938.0" y="566.0">Thiotte</text><text x="729.0" y="582.0">Bainet</text><text x="674.0" y="580.0">Côtes-de-Fer</text><text x="660.0" y="539.0">Grande Colline</text><text x="643.0" y="516.5">Miragoâne</text><text x="567.0" y="532.0">L'Asile</text><text x="570.0" y="558.0">Aquin</text><text x="534.0" y="557.5">Saint-Louis</text><text x="535.0" y="562.0">du Sud</text><text x="512.0" y="553.0">Cavaillon</text><text x="484.0" y="583.0">Les Cayes</text><text x="461.0" y="606.5">Port Salut</text><text x="445.0" y="613.0">Anse</text><text x="388.0" y="557.5">Chardonnières</text><text x="404.0" y="563.0">Port-à-Piment</text><text x="327.0" y="485.0">Dame-Marie</text><text x="318.0" y="503.5">Anse d'Hainault</text><text x="364.0" y="485.5">Marfranc</text><text x="392.0" y="477.5">Jérémie</text><text x="455.0" y="469.5">Corail</text></g><g class="lbl" font-size="4.2px" fill="#6f6d62" opacity="0.9" letter-spacing="1px"><text x="633.0" y="171.0">Nord-Ouest</text><text x="832.0" y="224.0">Nord</text><text x="916.0" y="250.5">Nord-Est</text><text x="746.9" y="327.5">Artibonite</text><text x="892.0" y="383.0">Centre</text><text x="789.0" y="439.5">Ouest</text><text x="374.3" y="497.0">Grand'Anse</text><text x="457.5" y="564.0">Sud</text><text x="561.0" y="519.0">Nippes</text><text x="801.0" y="555.5">Sud-Est</text><text x="857.5" y="537" letter-spacing="0.75px" font-size="3.9px">Franja española - región podemal</text></g></g><g fill="none" stroke="#27434d" stroke-width="1.1" opacity="0.85"><path d="M128.0,204.5 C131.7,204.2 143.0,203.6 150.0,203.0 C157.0,202.4 161.3,202.0 170.0,201.0 C178.7,200.0 189.5,199.5 202.0,197.0 C214.5,194.5 229.5,189.7 245.0,186.0 C260.5,182.3 278.3,178.7 295.0,175.0 C311.7,171.3 330.8,166.9 345.0,164.0 C359.2,161.1 370.8,160.0 380.0,157.5 C389.2,155.0 394.7,151.9 400.0,149.0 C405.3,146.1 408.7,143.2 412.0,140.0 C415.3,136.8 417.3,133.3 420.0,130.0 C422.7,126.7 425.5,123.3 428.0,120.0 C430.5,116.7 432.7,114.6 435.0,110.0 C437.3,105.4 440.3,98.8 442.0,92.5 C443.7,86.2 444.5,75.4 445.0,72.0"/><path d="M640.0,72.0 C638.8,74.0 635.2,79.8 632.5,84.0 C629.8,88.2 626.9,94.5 624.0,97.5 C621.1,100.5 618.2,100.8 615.0,102.0 C611.8,103.2 608.8,103.3 605.0,105.0 C601.2,106.7 596.2,109.7 592.0,112.0 C587.8,114.3 584.3,117.5 580.0,119.0 C575.7,120.5 570.6,120.4 566.0,121.0 C561.4,121.6 556.5,121.5 552.5,122.5 C548.5,123.5 545.3,125.3 542.0,127.0 C538.7,128.7 535.5,130.2 532.5,132.5 C529.5,134.8 526.5,138.1 524.0,141.0 C521.5,143.9 519.5,146.7 517.5,150.0 C515.5,153.3 513.4,157.2 512.0,161.0 C510.6,164.8 509.9,168.3 509.0,172.5 C508.1,176.7 507.0,181.4 506.5,186.0 C506.0,190.6 505.8,195.8 506.0,200.0 C506.2,204.2 506.8,207.2 507.5,211.0 C508.2,214.8 508.9,218.8 510.0,222.5 C511.1,226.2 512.3,229.7 514.0,233.0 C515.7,236.3 517.8,239.7 520.0,242.5 C522.2,245.3 524.5,247.5 527.0,250.0 C529.5,252.5 532.0,255.0 535.0,257.5 C538.0,260.0 540.4,262.8 545.0,265.0 C549.6,267.2 555.8,269.5 562.5,271.0 C569.2,272.5 575.4,273.5 585.0,274.0 C594.6,274.5 610.0,273.4 620.0,274.0 C630.0,274.6 639.2,276.4 645.0,277.5 C650.8,278.6 652.5,279.4 655.0,280.5 C657.5,281.6 658.5,282.8 660.0,284.0 C661.5,285.2 663.0,286.6 664.0,288.0 C665.0,289.4 665.7,290.0 666.0,292.5 C666.3,295.0 666.2,299.2 666.0,303.0 C665.8,306.8 665.8,309.2 665.0,315.0 C664.2,320.8 661.7,333.8 661.0,337.5"/><path d="M661.0,337.5 C658.8,337.4 652.8,337.0 648.0,337.0 C643.2,337.0 638.0,337.5 632.5,337.5 C627.0,337.5 620.4,337.0 615.0,337.0 C609.6,337.0 604.2,337.0 600.0,337.5 C595.8,338.0 593.3,338.9 590.0,340.0 C586.7,341.1 583.3,342.3 580.0,344.0 C576.7,345.7 573.3,347.8 570.0,350.0 C566.7,352.2 562.8,355.0 560.0,357.5 C557.2,360.0 555.1,362.5 553.0,365.0 C550.9,367.5 549.0,369.8 547.5,372.5 C546.0,375.2 544.8,378.1 544.0,381.0 C543.2,383.9 543.0,385.6 542.5,390.0 C542.0,394.4 541.0,403.0 541.0,407.5 C541.0,412.0 541.8,414.1 542.5,417.0 C543.2,419.9 543.9,422.3 545.0,425.0 C546.1,427.7 547.3,430.5 549.0,433.0 C550.7,435.5 551.9,437.6 555.0,440.0 C558.1,442.4 565.4,446.2 567.5,447.5"/><path d="M567.5,447.5 C565.8,446.4 561.2,443.1 557.5,441.0 C553.8,438.9 549.2,436.7 545.0,435.0 C540.8,433.3 536.2,432.2 532.0,431.0 C527.8,429.8 525.3,429.3 520.0,427.5 C514.7,425.7 505.3,421.6 500.0,420.0 C494.7,418.4 491.8,418.4 488.0,418.0 C484.2,417.6 481.0,417.4 477.5,417.5 C474.0,417.6 470.3,417.9 467.0,418.5 C463.7,419.1 461.2,419.2 457.5,421.0 C453.8,422.8 448.8,427.9 445.0,429.0 C441.2,430.1 438.3,428.3 435.0,427.5 C431.7,426.7 428.3,425.6 425.0,424.0 C421.7,422.4 418.3,419.7 415.0,418.0 C411.7,416.3 408.7,415.2 405.0,414.0 C401.3,412.8 397.2,411.3 393.0,410.5 C388.8,409.7 385.2,409.2 380.0,409.0 C374.8,408.8 367.8,409.2 362.0,409.5 C356.2,409.8 350.3,410.2 345.0,411.0 C339.7,411.8 335.0,413.0 330.0,414.5 C325.0,416.0 319.3,418.1 315.0,420.0 C310.7,421.9 307.3,423.9 304.0,426.0 C300.7,428.1 297.8,430.0 295.0,432.5 C292.2,435.0 289.5,438.1 287.0,441.0 C284.5,443.9 281.7,446.8 280.0,450.0 C278.3,453.2 277.8,456.7 277.0,460.0 C276.2,463.3 276.6,465.0 275.0,470.0 C273.4,475.0 269.6,482.9 267.5,490.0 C265.4,497.1 263.4,507.2 262.5,512.5 C261.6,517.8 262.0,518.7 262.0,522.0 C262.0,525.3 262.0,529.0 262.5,532.5 C263.0,536.0 263.8,539.7 265.0,543.0 C266.2,546.3 268.0,549.2 270.0,552.5 C272.0,555.8 274.5,559.7 277.0,563.0 C279.5,566.3 282.2,569.6 285.0,572.5 C287.8,575.4 290.7,578.0 294.0,580.5 C297.3,583.0 299.8,584.4 305.0,587.5 C310.2,590.6 318.3,596.2 325.0,599.0 C331.7,601.8 338.3,603.0 345.0,604.0 C351.7,605.0 360.3,604.3 365.0,605.0 C369.7,605.7 370.5,606.8 373.0,608.0 C375.5,609.2 377.7,610.8 380.0,612.5 C382.3,614.2 384.9,616.4 387.0,618.5 C389.1,620.6 390.2,622.1 392.5,625.0 C394.8,627.9 397.8,630.2 401.0,636.0 C404.2,641.8 410.2,656.0 412.0,660.0"/><path d="M552.5,660.0 C554.6,657.5 562.1,649.3 565.0,645.0 C567.9,640.7 568.3,637.3 570.0,634.0 C571.7,630.7 573.3,626.8 575.0,625.0 C576.7,623.2 578.3,623.4 580.0,623.0 C581.7,622.6 580.8,622.3 585.0,622.5 C589.2,622.7 599.2,623.2 605.0,624.0 C610.8,624.8 614.2,626.1 620.0,627.5 C625.8,628.9 633.3,631.1 640.0,632.5 C646.7,633.9 653.3,634.6 660.0,636.0 C666.7,637.4 673.3,639.9 680.0,641.0 C686.7,642.1 693.3,642.5 700.0,642.5 C706.7,642.5 714.2,641.8 720.0,641.0 C725.8,640.2 730.4,638.9 735.0,637.5 C739.6,636.1 743.7,633.2 747.5,632.5 C751.3,631.8 754.2,632.6 758.0,633.0 C761.8,633.4 766.0,635.3 770.0,635.0 C774.0,634.7 777.8,632.7 782.0,631.0 C786.2,629.3 788.7,626.8 795.0,625.0 C801.3,623.2 810.0,621.0 820.0,620.0 C830.0,619.0 845.8,618.6 855.0,618.8 C864.2,619.0 869.2,619.8 875.0,621.0 C880.8,622.2 885.8,622.4 890.0,626.0 C894.2,629.6 894.6,636.8 900.0,642.5 C905.4,648.2 918.8,657.1 922.5,660.0"/><path d="M765.0,72.0 C765.8,73.2 766.7,75.6 770.0,79.0 C773.3,82.4 780.4,87.3 785.0,92.5 C789.6,97.7 794.6,104.8 797.5,110.0 C800.4,115.2 797.1,120.2 802.5,124.0 C807.9,127.8 819.6,130.7 830.0,132.5 C840.4,134.3 855.8,133.6 865.0,135.0 C874.2,136.4 880.0,138.1 885.0,141.0 C890.0,143.9 890.8,148.1 895.0,152.5 C899.2,156.9 905.0,162.5 910.0,167.5 C915.0,172.5 919.2,177.8 925.0,182.5 C930.8,187.2 939.8,192.7 945.0,196.0 C950.2,199.3 954.2,201.4 956.0,202.5"/><path d="M942.5,72 L925,92.5 L902.5,120 L885,141"/><path d="M922.5,660 L945,642.5 L962.5,618"/><circle cx="184.6" cy="524.7" r="53"/><path d="M895,150 L912,166 L930,181 L948,194" stroke-width="0.6" transform="translate(3,-2.5)"/></g><g fill="#8da3a6" opacity="0.2"><rect x="172.0" y="199.0" width="14.0" height="2.6" transform="rotate(-6 172.0 199.0)"/><rect x="243.0" y="184.5" width="10.0" height="2.6" transform="rotate(-14 243.0 184.5)"/><rect x="281.0" y="176.0" width="14.0" height="2.6" transform="rotate(-14 281.0 176.0)"/><rect x="361.0" y="158.0" width="8.0" height="2.6" transform="rotate(-14 361.0 158.0)"/><rect x="391.0" y="150.0" width="14.0" height="2.6" transform="rotate(-28 391.0 150.0)"/><rect x="574.0" y="120.0" width="8.0" height="2.6" transform="rotate(-8 574.0 120.0)"/><rect x="508.0" y="198.0" width="7.0" height="2.6" transform="rotate(90 508.0 198.0)"/><rect x="581.0" y="272.0" width="9.0" height="2.6" transform="rotate(2 581.0 272.0)"/><rect x="545.0" y="388.0" width="7.0" height="2.6" transform="rotate(90 545.0 388.0)"/><rect x="531.0" y="427.0" width="9.0" height="2.6" transform="rotate(18 531.0 427.0)"/><rect x="183.0" y="473.0" width="9.0" height="2.6" transform="rotate(0 183.0 473.0)"/><rect x="178.0" y="571.0" width="12.0" height="2.6" transform="rotate(8 178.0 571.0)"/><rect x="263.0" y="528.0" width="7.0" height="2.6" transform="rotate(90 263.0 528.0)"/><rect x="347.0" y="602.0" width="10.0" height="2.6" transform="rotate(6 347.0 602.0)"/><rect x="600.0" y="622.0" width="9.0" height="2.6" transform="rotate(4 600.0 622.0)"/><rect x="810.0" y="620.0" width="9.0" height="2.6" transform="rotate(-8 810.0 620.0)"/><rect x="872.0" y="141.0" width="9.0" height="2.6" transform="rotate(14 872.0 141.0)"/><rect x="785.0" y="92.0" width="7.0" height="2.6" transform="rotate(52 785.0 92.0)"/><rect x="658.0" y="282.0" width="7.0" height="2.6" transform="rotate(40 658.0 282.0)"/><rect x="600.0" y="336.0" width="9.0" height="2.6" transform="rotate(0 600.0 336.0)"/><rect x="755.0" y="631.0" width="9.0" height="2.6" transform="rotate(0 755.0 631.0)"/></g><ellipse cx="184.6" cy="523.8" rx="2" ry="1.2" fill="#7d9a52"/><rect x="130" y="636" width="357.5" height="22" fill="#1f3b43" opacity="0.93"/><g stroke="#cfd8d4" stroke-width="0.6" fill="none" opacity="0.85"><path d="M133.8,647.2 L484,647.2"/><path d="M133.8,645.4 L133.8,647.2"/><path d="M179.0,645.4 L179.0,647.2"/><path d="M224.1,645.4 L224.1,647.2"/><path d="M269.3,645.4 L269.3,647.2"/><path d="M314.5,645.4 L314.5,647.2"/><path d="M359.7,645.4 L359.7,647.2"/><path d="M404.8,645.4 L404.8,647.2"/><path d="M450.0,645.4 L450.0,647.2"/><path d="M133.8,647.2 L133.8,649"/><path d="M192.0,647.2 L192.0,649"/><path d="M250.1,647.2 L250.1,649"/><path d="M308.2,647.2 L308.2,649"/><path d="M366.4,647.2 L366.4,649"/><path d="M424.6,647.2 L424.6,649"/></g><g class="mono" font-size="3.6px" fill="#d5dcd8" opacity="0.9" text-anchor="middle"><text x="133.8" y="643.6">0</text><text x="179.0" y="643.6">20</text><text x="224.1" y="643.6">40</text><text x="269.3" y="643.6">60</text><text x="314.5" y="643.6">80</text><text x="359.7" y="643.6">100</text><text x="404.8" y="643.6">120</text><text x="450.0" y="643.6">140</text><text x="133.8" y="653.8">0</text><text x="192.0" y="653.8">16</text><text x="250.1" y="653.8">32</text><text x="308.2" y="653.8">48</text><text x="366.4" y="653.8">64</text><text x="424.6" y="653.8">80</text><text x="473" y="643.6">kilometers</text><text x="470" y="653.8">miles</text></g></g><g fill="none" stroke="#dfe6d6" stroke-opacity="0.3" stroke-width="0.5"><path d="M194.3,57.5 L186.3,674"/><path d="M428.0,57.5 L424.5,674"/><path d="M663.5,57.5 L662.3,674"/><path d="M898.5,57.5 L900.5,674"/><path d="M1133.0,57.5 L1138.8,674"/></g><g fill="none" stroke="#dfe6d6" stroke-opacity="0.32" stroke-width="0.9"><path d="M114,126.4 Q650,135.8 1186.5,128.9"/><path d="M114,375.0 Q650,382.9 1186.5,377.3"/><path d="M114,623.8 Q650,631.7 1186.5,626.0"/></g><rect x="130.0" y="73.0" width="1040.5" height="584.5" fill="none" stroke="#8ea39a" stroke-width="1"/><g class="mono" fill="#cfc9b6" font-size="10px"><text x="194.9" y="46.6" text-anchor="middle">-75°</text><text x="188.1" y="690.9" text-anchor="middle">-75°</text><text x="428.6" y="46.6" text-anchor="middle">-74°</text><text x="426.3" y="690.9" text-anchor="middle">-74°</text><text x="664.1" y="46.6" text-anchor="middle">-73°</text><text x="664.1" y="690.9" text-anchor="middle">-73°</text><text x="899.1" y="46.6" text-anchor="middle">-72°</text><text x="902.3" y="690.9" text-anchor="middle">-72°</text><text x="1133.6" y="46.6" text-anchor="middle">-71°</text><text x="1140.6" y="690.9" text-anchor="middle">-71°</text><text x="105.2" y="130.5" text-anchor="end">20°</text><text x="1197.2" y="133.5">20°</text><text x="105.2" y="379.1" text-anchor="end">19°</text><text x="1197.2" y="381.9">19°</text><text x="105.2" y="627.9" text-anchor="end">18°</text><text x="1197.2" y="630.6">18°</text></g><g class="mono" fill="#d8d3c2" font-size="8px"><text x="659.3" y="19" text-anchor="middle">20°28´N</text><text x="659.3" y="717.6" text-anchor="middle">17°38´N</text><text x="47.5" y="369.4" text-anchor="middle">75°42´W</text><text x="1251.5" y="369.4" text-anchor="middle">70°24´W</text></g><text class="mono" x="74.3" y="19" font-size="9px" font-weight="bold" fill="#e4dfcf">Haiti - Port-au-Prince</text><g opacity="0.57"><text class="wm" transform="translate(152.14,247.90) scale(0.3858,0.6407)" font-size="100px" fill="#ffffff" stroke="#ffffff" stroke-width="2.6" vector-effect="non-scaling-stroke" stroke-linejoin="round">a<tspan font-size="83.9px" vector-effect="non-scaling-stroke" stroke-width="4.7" dx="5.7" dy="-1.6">l</tspan><tspan dx="-2.6" dy="1.6">amy</tspan></text></g><g opacity="0.57"><text class="wm" transform="translate(595.94,378.30) scale(0.3858,0.6407)" font-size="100px" fill="#ffffff" stroke="#ffffff" stroke-width="2.6" vector-effect="non-scaling-stroke" stroke-linejoin="round">a<tspan font-size="83.9px" vector-effect="non-scaling-stroke" stroke-width="4.7" dx="5.7" dy="-1.6">l</tspan><tspan dx="-2.6" dy="1.6">amy</tspan></text></g><g opacity="0.57"><text class="wm" transform="translate(1042.74,247.90) scale(0.3858,0.6407)" font-size="100px" fill="#ffffff" stroke="#ffffff" stroke-width="2.6" vector-effect="non-scaling-stroke" stroke-linejoin="round">a<tspan font-size="83.9px" vector-effect="non-scaling-stroke" stroke-width="4.7" dx="5.7" dy="-1.6">l</tspan><tspan dx="-2.6" dy="1.6">amy</tspan></text></g><g opacity="0.57"><text class="wm" transform="translate(-5.06,638.50) scale(0.3858,0.6407)" font-size="100px" fill="#ffffff" stroke="#ffffff" stroke-width="2.6" vector-effect="non-scaling-stroke" stroke-linejoin="round">a<tspan font-size="83.9px" vector-effect="non-scaling-stroke" stroke-width="4.7" dx="5.7" dy="-1.6">l</tspan><tspan dx="-2.6" dy="1.6">amy</tspan></text></g><g opacity="0.57"><text class="wm" transform="translate(890.94,638.30) scale(0.3858,0.6407)" font-size="100px" fill="#ffffff" stroke="#ffffff" stroke-width="2.6" vector-effect="non-scaling-stroke" stroke-linejoin="round">a<tspan font-size="83.9px" vector-effect="non-scaling-stroke" stroke-width="4.7" dx="5.7" dy="-1.6">l</tspan><tspan dx="-2.6" dy="1.6">amy</tspan></text></g><g opacity="0.62"><text class="wm" transform="translate(40.95,113.55) scale(0.2558,0.4073)" font-size="100px" fill="#ffffff" stroke="#ffffff" stroke-width="1.7" vector-effect="non-scaling-stroke" stroke-linejoin="round">a</text></g><g opacity="0.62"><text class="wm" transform="translate(340.95,113.55) scale(0.2558,0.4073)" font-size="100px" fill="#ffffff" stroke="#ffffff" stroke-width="1.7" vector-effect="non-scaling-stroke" stroke-linejoin="round">a</text></g><g opacity="0.62"><text class="wm" transform="translate(640.95,113.55) scale(0.2558,0.4073)" font-size="100px" fill="#ffffff" stroke="#ffffff" stroke-width="1.7" vector-effect="non-scaling-stroke" stroke-linejoin="round">a</text></g><g opacity="0.62"><text class="wm" transform="translate(940.95,113.55) scale(0.2558,0.4073)" font-size="100px" fill="#ffffff" stroke="#ffffff" stroke-width="1.7" vector-effect="non-scaling-stroke" stroke-linejoin="round">a</text></g><g opacity="0.62"><text class="wm" transform="translate(1240.95,113.55) scale(0.2558,0.4073)" font-size="100px" fill="#ffffff" stroke="#ffffff" stroke-width="1.7" vector-effect="non-scaling-stroke" stroke-linejoin="round">a</text></g><g opacity="0.62"><text class="wm" transform="translate(490.95,243.55) scale(0.2558,0.4073)" font-size="100px" fill="#ffffff" stroke="#ffffff" stroke-width="1.7" vector-effect="non-scaling-stroke" stroke-linejoin="round">a</text></g><g opacity="0.62"><text class="wm" transform="translate(790.95,243.55) scale(0.2558,0.4073)" font-size="100px" fill="#ffffff" stroke="#ffffff" stroke-width="1.7" vector-effect="non-scaling-stroke" stroke-linejoin="round">a</text></g><g opacity="0.62"><text class="wm" transform="translate(40.95,373.55) scale(0.2558,0.4073)" font-size="100px" fill="#ffffff" stroke="#ffffff" stroke-width="1.7" vector-effect="non-scaling-stroke" stroke-linejoin="round">a</text></g><g opacity="0.62"><text class="wm" transform="translate(340.95,373.55) scale(0.2558,0.4073)" font-size="100px" fill="#ffffff" stroke="#ffffff" stroke-width="1.7" vector-effect="non-scaling-stroke" stroke-linejoin="round">a</text></g><g opacity="0.62"><text class="wm" transform="translate(940.95,373.55) scale(0.2558,0.4073)" font-size="100px" fill="#ffffff" stroke="#ffffff" stroke-width="1.7" vector-effect="non-scaling-stroke" stroke-linejoin="round">a</text></g><g opacity="0.62"><text class="wm" transform="translate(1240.95,373.55) scale(0.2558,0.4073)" font-size="100px" fill="#ffffff" stroke="#ffffff" stroke-width="1.7" vector-effect="non-scaling-stroke" stroke-linejoin="round">a</text></g><g opacity="0.62"><text class="wm" transform="translate(190.95,503.55) scale(0.2558,0.4073)" font-size="100px" fill="#ffffff" stroke="#ffffff" stroke-width="1.7" vector-effect="non-scaling-stroke" stroke-linejoin="round">a</text></g><g opacity="0.62"><text class="wm" transform="translate(490.95,503.55) scale(0.2558,0.4073)" font-size="100px" fill="#ffffff" stroke="#ffffff" stroke-width="1.7" vector-effect="non-scaling-stroke" stroke-linejoin="round">a</text></g><g opacity="0.62"><text class="wm" transform="translate(790.95,503.55) scale(0.2558,0.4073)" font-size="100px" fill="#ffffff" stroke="#ffffff" stroke-width="1.7" vector-effect="non-scaling-stroke" stroke-linejoin="round">a</text></g><g opacity="0.62"><text class="wm" transform="translate(1090.95,503.55) scale(0.2558,0.4073)" font-size="100px" fill="#ffffff" stroke="#ffffff" stroke-width="1.7" vector-effect="non-scaling-stroke" stroke-linejoin="round">a</text></g><g opacity="0.62"><text class="wm" transform="translate(340.95,633.55) scale(0.2558,0.4073)" font-size="100px" fill="#ffffff" stroke="#ffffff" stroke-width="1.7" vector-effect="non-scaling-stroke" stroke-linejoin="round">a</text></g><g opacity="0.62"><text class="wm" transform="translate(640.95,633.55) scale(0.2558,0.4073)" font-size="100px" fill="#ffffff" stroke="#ffffff" stroke-width="1.7" vector-effect="non-scaling-stroke" stroke-linejoin="round">a</text></g><g opacity="0.62"><text class="wm" transform="translate(1240.95,633.55) scale(0.2558,0.4073)" font-size="100px" fill="#ffffff" stroke="#ffffff" stroke-width="1.7" vector-effect="non-scaling-stroke" stroke-linejoin="round">a</text></g><rect x="0" y="730.6" width="1300" height="90.4" fill="#000"/><g opacity="1.00"><text class="wm" transform="translate(50.22,790.30) scale(0.3605,0.5796)" font-size="100px" fill="#ffffff" stroke="#ffffff" stroke-width="2.6" vector-effect="non-scaling-stroke" stroke-linejoin="round">a<tspan font-size="84.3px" vector-effect="non-scaling-stroke" stroke-width="4.7" dx="6.1" dy="-1.8">l</tspan><tspan dx="-2.7" dy="1.8">amy</tspan></text></g><text class="lbl" x="1116.2" y="768" font-size="14.2px" fill="#f4f4f4" textLength="133.6" lengthAdjust="spacingAndGlyphs">Image ID: 2WA73ED</text><text class="lbl" x="1115.4" y="791.4" font-size="15.3px" font-weight="bold" fill="#ffffff" textLength="134.8" lengthAdjust="spacingAndGlyphs">www.alamy.com</text></svg></body></html>
